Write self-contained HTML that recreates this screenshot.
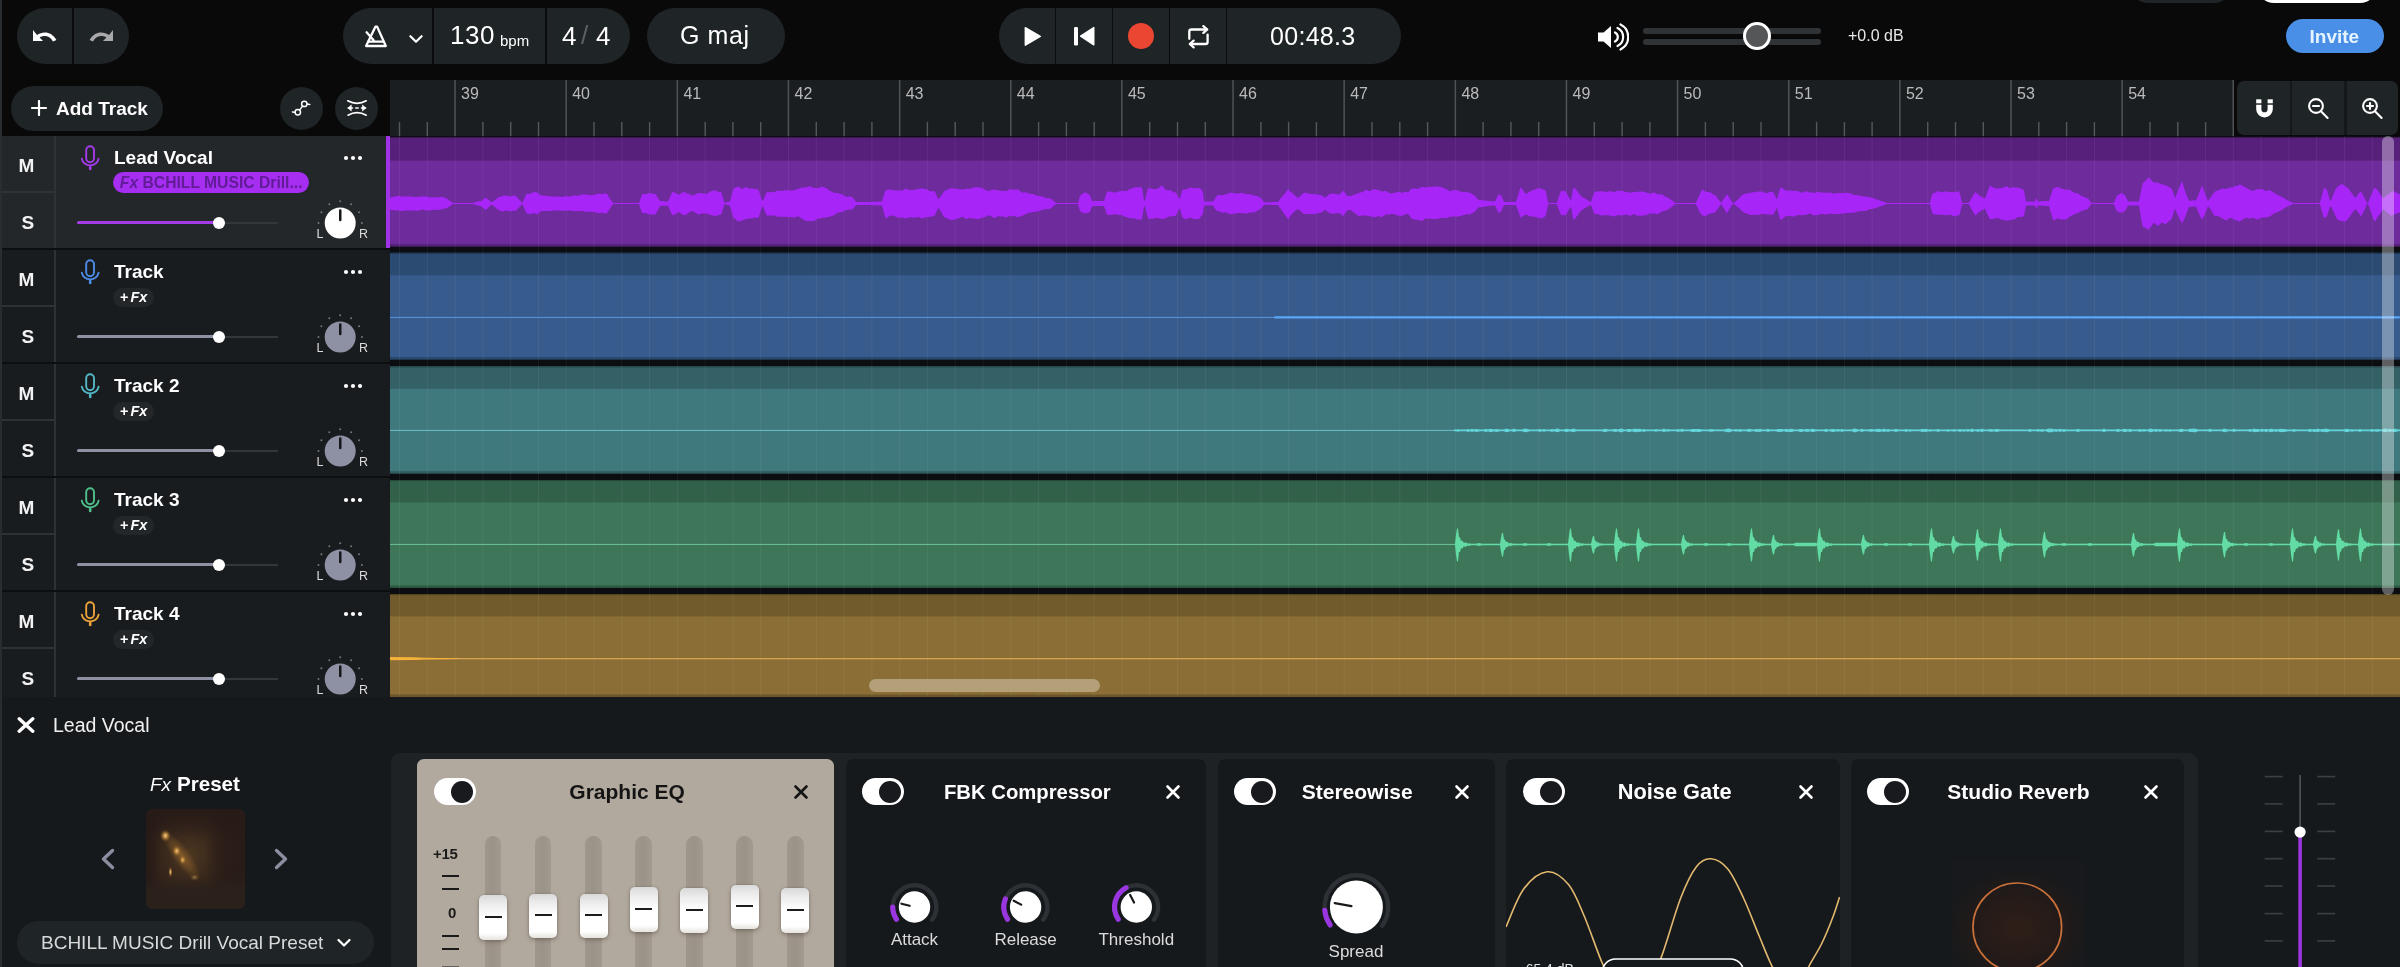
<!DOCTYPE html><html><head><meta charset="utf-8"><title>Studio</title><style>
*{box-sizing:border-box;margin:0;padding:0}
html,body{width:2400px;height:967px;overflow:hidden;background:#090909;font-family:"Liberation Sans",sans-serif;color:#fff}
.abs{position:absolute}
#root{position:relative;width:2400px;height:967px;overflow:hidden;background:#090909;will-change:transform}
.pill{position:absolute;background:#1f2427;border-radius:28px}
.t{position:absolute;white-space:nowrap;line-height:1}
.div{position:absolute;top:0;bottom:0;width:2px;background:#0b0c0d}
</style></head><body><div id="root">
<div class="abs" style="left:0;top:0;width:1.5px;height:967px;background:#2a2d30"></div>
<div class="abs" style="left:2131px;top:-31.3px;width:100px;height:34px;border-radius:17px;background:#1f2427"></div>
<div class="abs" style="left:2257px;top:-31.2px;width:119.5px;height:34px;border-radius:17px;background:#fff"></div>
<div class="pill" style="left:17px;top:8px;width:112px;height:56px"><div class="div" style="left:55px"></div>
<svg class="abs" style="left:15px;top:21px" width="26" height="16" viewBox="0 0 26 16"><path d="M1 1 L1 12 L11 12 L7.6 8.6 C12 5.6 18 7 21 12.4 L24.4 11 C20 2.5 11 1.6 5 6 Z" fill="#fff"/></svg>
<svg class="abs" style="left:71px;top:21px" width="26" height="16" viewBox="0 0 26 16"><path d="M25 1 L25 12 L15 12 L18.4 8.6 C14 5.6 8 7 5 12.4 L1.6 11 C6 2.5 15 1.6 21 6 Z" fill="#a9a9ab"/></svg>
</div>
<div class="pill" style="left:343px;top:8px;width:287px;height:56px"><div class="div" style="left:89px"></div><div class="div" style="left:202px"></div>
<svg class="abs" style="left:19px;top:14px" width="28" height="28" viewBox="0 0 28 28" fill="none" stroke="#fff" stroke-width="2.3" stroke-linejoin="round" stroke-linecap="round"><path d="M13.5 4.6 L15.1 4.6 L23.8 24 L4.1 24 Z"/><path d="M6.3 19.6 L21.6 19.6"/><path d="M4.6 10.3 L11.6 18.3"/></svg>
<svg class="abs" style="left:64.5px;top:26px" width="16" height="10" viewBox="0 0 16 10" fill="none" stroke="#fff" stroke-width="2.2" stroke-linecap="round" stroke-linejoin="round"><path d="M2.4 2.2 L8 7.7 L13.6 2.2"/></svg>
<span class="t" style="left:107px;top:14px;font-size:26px;letter-spacing:.5px">130</span><span class="t" style="left:157px;top:25px;font-size:15px">bpm</span>
<span class="t" style="left:219px;top:15px;font-size:26px">4</span><span class="t" style="left:238px;top:14px;font-size:26px;color:#5d6266">/</span><span class="t" style="left:253px;top:15px;font-size:26px">4</span>
</div>
<div class="pill" style="left:647px;top:8px;width:138px;height:56px"><span class="t" style="left:33px;top:15px;font-size:25px;letter-spacing:.6px">G maj</span></div>
<div class="pill" style="left:999px;top:8px;width:402px;height:56px"><div class="div" style="left:55.7px;width:1.6px"></div><div class="div" style="left:112.7px;width:1.6px"></div><div class="div" style="left:169.7px;width:1.6px"></div><div class="div" style="left:226.7px;width:1.6px"></div>
<svg class="abs" style="left:25px;top:18px" width="18" height="21" viewBox="0 0 18 21"><path d="M1.3 1.6 L16.3 10.4 L1.3 19.2 Z" fill="#fff" stroke="#fff" stroke-width="1.4" stroke-linejoin="round"/></svg>
<svg class="abs" style="left:73.5px;top:18px" width="24" height="20" viewBox="0 0 24 20"><rect x="1" y="1" width="4" height="18.4" rx="1.2" fill="#fff"/><path d="M20.8 1.6 L20.8 18.8 L7.6 10.2 Z" fill="#fff" stroke="#fff" stroke-width="1.4" stroke-linejoin="round"/></svg>
<div class="abs" style="left:129px;top:14.5px;width:26px;height:26px;border-radius:50%;background:#ea4631"></div>
<svg class="abs" style="left:189px;top:16.5px" width="21" height="24" viewBox="0 0 21 24" fill="none" stroke="#fff" stroke-width="2.3" stroke-linecap="round" stroke-linejoin="round"><path d="M1.3 13.8 L1.3 6.6 Q1.3 4.5 3.4 4.5 L18.8 4.5"/><path d="M15.4 1.1 L19.2 4.5 L15.4 7.9"/><path d="M19.6 9.6 L19.6 16.9 Q19.6 19 17.5 19 L2.2 19"/><path d="M5.6 15.6 L1.8 19 L5.6 22.4"/></svg>
<span class="t" style="left:271px;top:16px;font-size:25px;letter-spacing:.3px">00:48.3</span>
</div>
<svg class="abs" style="left:1597px;top:23px" width="32" height="28" viewBox="0 0 32 28"><path d="M1 9.5 L6.5 9.5 L14 3 L14 25 L6.5 18.5 L1 18.5 Z" fill="#fff"/><path d="M18 9.5 A5 5 0 0 1 18 18.5" fill="none" stroke="#fff" stroke-width="2.2" stroke-linecap="round"/><path d="M20.5 5 A10 10 0 0 1 20.5 23" fill="none" stroke="#fff" stroke-width="2.2" stroke-linecap="round"/><path d="M23.5 1.5 A14 14 0 0 1 23.5 26.5" fill="none" stroke="#fff" stroke-width="2.2" stroke-linecap="round"/></svg>
<div class="abs" style="left:1643px;top:28px;width:178px;height:6px;border-radius:3px;background:#303336"></div>
<div class="abs" style="left:1643px;top:39px;width:178px;height:6px;border-radius:3px;background:#303336"></div>
<div class="abs" style="left:1743px;top:22px;width:28px;height:28px;border-radius:50%;background:#555658;border:3px solid #fff"></div>
<span class="t" style="left:1848px;top:28px;font-size:16px;color:#e8e8e8">+0.0 dB</span>
<div class="abs" style="left:2286px;top:19.3px;width:97.5px;height:33.5px;border-radius:17px;background:#4a8fe7"><span class="t" style="left:23.5px;top:8px;font-size:19px;font-weight:bold;color:#e6f4ff">Invite</span></div>
<div class="pill" style="left:11px;top:86px;width:152px;height:45px;border-radius:23px"><svg class="abs" style="left:20px;top:14px" width="16" height="16" viewBox="0 0 16 16"><path d="M8 1 V15 M1 8 H15" stroke="#fff" stroke-width="2.2" stroke-linecap="round"/></svg><span class="t" style="left:45px;top:13px;font-size:19px;font-weight:bold">Add Track</span></div>
<div class="abs" style="left:279.8px;top:87px;width:43px;height:43px;border-radius:50%;background:#1f2427"><svg class="abs" style="left:-0.5px;top:-0.6px" width="44" height="44" viewBox="0 0 44 44" fill="none" stroke="#fff" stroke-width="1.5" stroke-linecap="round"><circle cx="25.3" cy="17.9" r="2.7"/><circle cx="18.8" cy="26.3" r="2.7"/><path d="M20.5 24.1 L23.6 20.1 M28 18 L30.8 18.4 M13.4 25.9 L16.1 26.2"/></svg></div>
<div class="abs" style="left:335.4px;top:87px;width:43px;height:43px;border-radius:50%;background:#1f2427"><svg class="abs" style="left:-0.5px;top:-0.6px" width="44" height="44" viewBox="0 0 44 44" fill="none" stroke="#fff" stroke-width="1.6" stroke-linecap="round" stroke-linejoin="round"><path d="M12.7 14.8 Q22 19.9 31.3 14.8"/><path d="M13 29.2 Q22 24.1 31.3 29.2"/><path d="M13.2 22 L17.5 22 M20.8 22 L23.2 22 M26.5 22 L30.6 22"/><path d="M16 19.4 L13.1 22 L16 24.6 Z M27.8 19.4 L30.7 22 L27.8 24.6 Z" fill="#fff" stroke-width="0.8"/></svg></div>
<div class="abs" style="left:390px;top:80px;width:1844px;height:56px;background:#1b1e21;overflow:hidden">
<svg class="abs" style="left:0;top:0" width="1846" height="56" viewBox="390 80 1846 56"><rect x="371.0" y="122" width="1.4" height="14" fill="#55585b"/><rect x="398.8" y="122" width="1.4" height="14" fill="#55585b"/><rect x="426.6" y="122" width="1.4" height="14" fill="#55585b"/><rect x="454.3" y="80" width="1.5" height="56" fill="#505356"/><text x="461.1" y="99" font-size="16" fill="#b9babb" font-family="Liberation Sans, sans-serif">39</text><rect x="482.2" y="122" width="1.4" height="14" fill="#55585b"/><rect x="510.0" y="122" width="1.4" height="14" fill="#55585b"/><rect x="537.8" y="122" width="1.4" height="14" fill="#55585b"/><rect x="565.4" y="80" width="1.5" height="56" fill="#505356"/><text x="572.2" y="99" font-size="16" fill="#b9babb" font-family="Liberation Sans, sans-serif">40</text><rect x="593.3" y="122" width="1.4" height="14" fill="#55585b"/><rect x="621.1" y="122" width="1.4" height="14" fill="#55585b"/><rect x="648.9" y="122" width="1.4" height="14" fill="#55585b"/><rect x="676.6" y="80" width="1.5" height="56" fill="#505356"/><text x="683.4" y="99" font-size="16" fill="#b9babb" font-family="Liberation Sans, sans-serif">41</text><rect x="704.5" y="122" width="1.4" height="14" fill="#55585b"/><rect x="732.2" y="122" width="1.4" height="14" fill="#55585b"/><rect x="760.0" y="122" width="1.4" height="14" fill="#55585b"/><rect x="787.7" y="80" width="1.5" height="56" fill="#505356"/><text x="794.5" y="99" font-size="16" fill="#b9babb" font-family="Liberation Sans, sans-serif">42</text><rect x="815.6" y="122" width="1.4" height="14" fill="#55585b"/><rect x="843.4" y="122" width="1.4" height="14" fill="#55585b"/><rect x="871.2" y="122" width="1.4" height="14" fill="#55585b"/><rect x="898.9" y="80" width="1.5" height="56" fill="#505356"/><text x="905.7" y="99" font-size="16" fill="#b9babb" font-family="Liberation Sans, sans-serif">43</text><rect x="926.7" y="122" width="1.4" height="14" fill="#55585b"/><rect x="954.5" y="122" width="1.4" height="14" fill="#55585b"/><rect x="982.3" y="122" width="1.4" height="14" fill="#55585b"/><rect x="1010.0" y="80" width="1.5" height="56" fill="#505356"/><text x="1016.8" y="99" font-size="16" fill="#b9babb" font-family="Liberation Sans, sans-serif">44</text><rect x="1037.9" y="122" width="1.4" height="14" fill="#55585b"/><rect x="1065.7" y="122" width="1.4" height="14" fill="#55585b"/><rect x="1093.5" y="122" width="1.4" height="14" fill="#55585b"/><rect x="1121.1" y="80" width="1.5" height="56" fill="#505356"/><text x="1127.9" y="99" font-size="16" fill="#b9babb" font-family="Liberation Sans, sans-serif">45</text><rect x="1149.0" y="122" width="1.4" height="14" fill="#55585b"/><rect x="1176.8" y="122" width="1.4" height="14" fill="#55585b"/><rect x="1204.6" y="122" width="1.4" height="14" fill="#55585b"/><rect x="1232.3" y="80" width="1.5" height="56" fill="#505356"/><text x="1239.1" y="99" font-size="16" fill="#b9babb" font-family="Liberation Sans, sans-serif">46</text><rect x="1260.2" y="122" width="1.4" height="14" fill="#55585b"/><rect x="1287.9" y="122" width="1.4" height="14" fill="#55585b"/><rect x="1315.7" y="122" width="1.4" height="14" fill="#55585b"/><rect x="1343.4" y="80" width="1.5" height="56" fill="#505356"/><text x="1350.2" y="99" font-size="16" fill="#b9babb" font-family="Liberation Sans, sans-serif">47</text><rect x="1371.3" y="122" width="1.4" height="14" fill="#55585b"/><rect x="1399.1" y="122" width="1.4" height="14" fill="#55585b"/><rect x="1426.9" y="122" width="1.4" height="14" fill="#55585b"/><rect x="1454.6" y="80" width="1.5" height="56" fill="#505356"/><text x="1461.4" y="99" font-size="16" fill="#b9babb" font-family="Liberation Sans, sans-serif">48</text><rect x="1482.4" y="122" width="1.4" height="14" fill="#55585b"/><rect x="1510.2" y="122" width="1.4" height="14" fill="#55585b"/><rect x="1538.0" y="122" width="1.4" height="14" fill="#55585b"/><rect x="1565.7" y="80" width="1.5" height="56" fill="#505356"/><text x="1572.5" y="99" font-size="16" fill="#b9babb" font-family="Liberation Sans, sans-serif">49</text><rect x="1593.6" y="122" width="1.4" height="14" fill="#55585b"/><rect x="1621.4" y="122" width="1.4" height="14" fill="#55585b"/><rect x="1649.2" y="122" width="1.4" height="14" fill="#55585b"/><rect x="1676.8" y="80" width="1.5" height="56" fill="#505356"/><text x="1683.6" y="99" font-size="16" fill="#b9babb" font-family="Liberation Sans, sans-serif">50</text><rect x="1704.7" y="122" width="1.4" height="14" fill="#55585b"/><rect x="1732.5" y="122" width="1.4" height="14" fill="#55585b"/><rect x="1760.3" y="122" width="1.4" height="14" fill="#55585b"/><rect x="1788.0" y="80" width="1.5" height="56" fill="#505356"/><text x="1794.8" y="99" font-size="16" fill="#b9babb" font-family="Liberation Sans, sans-serif">51</text><rect x="1815.9" y="122" width="1.4" height="14" fill="#55585b"/><rect x="1843.7" y="122" width="1.4" height="14" fill="#55585b"/><rect x="1871.4" y="122" width="1.4" height="14" fill="#55585b"/><rect x="1899.1" y="80" width="1.5" height="56" fill="#505356"/><text x="1905.9" y="99" font-size="16" fill="#b9babb" font-family="Liberation Sans, sans-serif">52</text><rect x="1927.0" y="122" width="1.4" height="14" fill="#55585b"/><rect x="1954.8" y="122" width="1.4" height="14" fill="#55585b"/><rect x="1982.6" y="122" width="1.4" height="14" fill="#55585b"/><rect x="2010.3" y="80" width="1.5" height="56" fill="#505356"/><text x="2017.1" y="99" font-size="16" fill="#b9babb" font-family="Liberation Sans, sans-serif">53</text><rect x="2038.1" y="122" width="1.4" height="14" fill="#55585b"/><rect x="2065.9" y="122" width="1.4" height="14" fill="#55585b"/><rect x="2093.7" y="122" width="1.4" height="14" fill="#55585b"/><rect x="2121.4" y="80" width="1.5" height="56" fill="#505356"/><text x="2128.2" y="99" font-size="16" fill="#b9babb" font-family="Liberation Sans, sans-serif">54</text><rect x="2149.3" y="122" width="1.4" height="14" fill="#55585b"/><rect x="2177.1" y="122" width="1.4" height="14" fill="#55585b"/><rect x="2204.9" y="122" width="1.4" height="14" fill="#55585b"/><rect x="2232.5" y="80" width="1.5" height="56" fill="#505356"/><text x="2239.3" y="99" font-size="16" fill="#b9babb" font-family="Liberation Sans, sans-serif">55</text><rect x="2260.4" y="122" width="1.4" height="14" fill="#55585b"/><rect x="2288.2" y="122" width="1.4" height="14" fill="#55585b"/><rect x="2316.0" y="122" width="1.4" height="14" fill="#55585b"/></svg>
</div>
<div class="abs" style="left:2237px;top:80.5px;width:160.5px;height:54.5px;background:#1f2427;border-radius:7px"><div class="div" style="left:53px;width:2.4px;background:#15181a"></div><div class="div" style="left:107.2px;width:2.4px;background:#15181a"></div>
<svg class="abs" style="left:18.7px;top:18.2px" width="17" height="19" viewBox="0 0 17 19"><rect x="0.2" y="0.3" width="5.2" height="4" fill="#fff"/><rect x="11.6" y="0.3" width="5.2" height="4" fill="#fff"/><path d="M0.2 5.7 H5.4 V10.2 A3.1 3.1 0 0 0 11.6 10.2 V5.7 H16.8 V10.2 A8.3 8.3 0 0 1 0.2 10.2 Z" fill="#fff"/></svg>
<svg class="abs" style="left:69px;top:15.3px" width="24" height="24" viewBox="0 0 24 24" fill="none" stroke="#fff" stroke-width="2.1" stroke-linecap="round"><circle cx="10" cy="10" r="6.9"/><path d="M15.2 15.4 L21.6 22 M7 10 H13"/></svg>
<svg class="abs" style="left:122.9px;top:15.3px" width="24" height="24" viewBox="0 0 24 24" fill="none" stroke="#fff" stroke-width="2.1" stroke-linecap="round"><circle cx="10" cy="10" r="6.9"/><path d="M15.2 15.4 L21.6 22 M7 10 H13 M10 7 V13"/></svg>
</div>
<div class="abs" style="left:2px;top:136px;width:388px;height:561px;background:#0d0e0f"></div>
<div class="abs" style="left:2px;top:136px;width:384px;height:112px;background:#23272a;overflow:hidden">
<div class="abs" style="left:52px;top:0;width:1.5px;height:112px;background:#2e3235"></div>
<div class="abs" style="left:0;top:55px;width:53px;height:1.5px;background:#2e3235"></div>
<span class="t" style="left:16.5px;top:19.5px;font-size:19px;font-weight:bold;color:#f2f2f2">M</span>
<span class="t" style="left:19.5px;top:76.5px;font-size:19px;font-weight:bold;color:#f2f2f2">S</span>
<svg class="abs" style="left:78px;top:9px" width="21" height="27" viewBox="0 0 21 27" fill="none" stroke="#a43be8" stroke-width="1.9" stroke-linecap="round"><rect x="6.2" y="1.2" width="7.8" height="16" rx="3.9"/><path d="M1.8 13.6 A8.5 8 0 0 0 18.6 13.6"/><path d="M10.2 21.8 V24" stroke-width="2.6"/></svg>
<span class="t" style="left:112px;top:12px;font-size:19px;font-weight:bold;color:#fff">Lead Vocal</span>
<svg class="abs" style="left:341px;top:18.5px" width="20" height="6" viewBox="0 0 20 6"><circle cx="3" cy="3" r="2.1" fill="#fff"/><circle cx="10" cy="3" r="2.1" fill="#fff"/><circle cx="17" cy="3" r="2.1" fill="#fff"/></svg>
<div class="abs" style="left:111px;top:36.3px;width:195.6px;height:20.8px;border-radius:10.4px;background:#a62ef0;overflow:hidden"><span class="t" style="left:6.8px;top:2.6px;font-size:15.7px;color:#621c98;font-weight:bold"><i>Fx</i> BCHILL MUSIC Drill...</span></div>
<div class="abs" style="left:75px;top:85.7px;width:201px;height:2px;background:#33373a"></div>
<div class="abs" style="left:75px;top:85.2px;width:142px;height:3px;border-radius:2px;background:#a43be8"></div>
<div class="abs" style="left:211px;top:80.7px;width:12px;height:12px;border-radius:50%;background:#fff"></div>
<svg class="abs" style="left:308px;top:60px" width="62" height="46" viewBox="0 0 62 46"><circle cx="8.5" cy="27.0" r="1" fill="#74777a"/><circle cx="11.4" cy="16.2" r="1" fill="#74777a"/><circle cx="19.3" cy="8.2" r="1" fill="#74777a"/><circle cx="30.2" cy="5.3" r="1" fill="#74777a"/><circle cx="41.1" cy="8.2" r="1" fill="#74777a"/><circle cx="49.0" cy="16.2" r="1" fill="#74777a"/><circle cx="51.9" cy="27.0" r="1" fill="#74777a"/><circle cx="30.2" cy="27" r="15.5" fill="#fff"/><rect x="29" y="13.2" width="2.5" height="12" rx="1.2" fill="#15171a"/><text x="6.5" y="42.3" font-size="12.5" fill="#dcdcdc" font-family="Liberation Sans, sans-serif">L</text><text x="49" y="42.3" font-size="12.5" fill="#dcdcdc" font-family="Liberation Sans, sans-serif">R</text></svg>
</div>
<div class="abs" style="left:2px;top:250px;width:388px;height:112px;background:#191c1f;overflow:hidden">
<div class="abs" style="left:52px;top:0;width:1.5px;height:112px;background:#2e3235"></div>
<div class="abs" style="left:0;top:55px;width:53px;height:1.5px;background:#2e3235"></div>
<span class="t" style="left:16.5px;top:19.5px;font-size:19px;font-weight:bold;color:#f2f2f2">M</span>
<span class="t" style="left:19.5px;top:76.5px;font-size:19px;font-weight:bold;color:#f2f2f2">S</span>
<svg class="abs" style="left:78px;top:9px" width="21" height="27" viewBox="0 0 21 27" fill="none" stroke="#4c8be6" stroke-width="1.9" stroke-linecap="round"><rect x="6.2" y="1.2" width="7.8" height="16" rx="3.9"/><path d="M1.8 13.6 A8.5 8 0 0 0 18.6 13.6"/><path d="M10.2 21.8 V24" stroke-width="2.6"/></svg>
<span class="t" style="left:112px;top:12px;font-size:19px;font-weight:bold;color:#fff">Track</span>
<svg class="abs" style="left:341px;top:18.5px" width="20" height="6" viewBox="0 0 20 6"><circle cx="3" cy="3" r="2.1" fill="#fff"/><circle cx="10" cy="3" r="2.1" fill="#fff"/><circle cx="17" cy="3" r="2.1" fill="#fff"/></svg>
<div class="abs" style="left:111px;top:149px;display:none"></div>
<div class="abs" style="left:111px;top:37.8px;width:40.5px;height:19px;border-radius:9.5px;background:#23272a"><span class="t" style="left:7px;top:2.3px;font-size:14.4px;color:#fff;font-weight:bold">+<i style="margin-left:2px">Fx</i></span></div>
<div class="abs" style="left:75px;top:85.7px;width:201px;height:2px;background:#33373a"></div>
<div class="abs" style="left:75px;top:85.2px;width:142px;height:3px;border-radius:2px;background:#8e91a3"></div>
<div class="abs" style="left:211px;top:80.7px;width:12px;height:12px;border-radius:50%;background:#fff"></div>
<svg class="abs" style="left:308px;top:60px" width="62" height="46" viewBox="0 0 62 46"><circle cx="8.5" cy="27.0" r="1" fill="#74777a"/><circle cx="11.4" cy="16.2" r="1" fill="#74777a"/><circle cx="19.3" cy="8.2" r="1" fill="#74777a"/><circle cx="30.2" cy="5.3" r="1" fill="#74777a"/><circle cx="41.1" cy="8.2" r="1" fill="#74777a"/><circle cx="49.0" cy="16.2" r="1" fill="#74777a"/><circle cx="51.9" cy="27.0" r="1" fill="#74777a"/><circle cx="30.2" cy="27" r="15.5" fill="#8e91a3"/><rect x="29" y="13.2" width="2.5" height="12" rx="1.2" fill="#15171a"/><text x="6.5" y="42.3" font-size="12.5" fill="#dcdcdc" font-family="Liberation Sans, sans-serif">L</text><text x="49" y="42.3" font-size="12.5" fill="#dcdcdc" font-family="Liberation Sans, sans-serif">R</text></svg>
</div>
<div class="abs" style="left:2px;top:364px;width:388px;height:112px;background:#191c1f;overflow:hidden">
<div class="abs" style="left:52px;top:0;width:1.5px;height:112px;background:#2e3235"></div>
<div class="abs" style="left:0;top:55px;width:53px;height:1.5px;background:#2e3235"></div>
<span class="t" style="left:16.5px;top:19.5px;font-size:19px;font-weight:bold;color:#f2f2f2">M</span>
<span class="t" style="left:19.5px;top:76.5px;font-size:19px;font-weight:bold;color:#f2f2f2">S</span>
<svg class="abs" style="left:78px;top:9px" width="21" height="27" viewBox="0 0 21 27" fill="none" stroke="#52b7c4" stroke-width="1.9" stroke-linecap="round"><rect x="6.2" y="1.2" width="7.8" height="16" rx="3.9"/><path d="M1.8 13.6 A8.5 8 0 0 0 18.6 13.6"/><path d="M10.2 21.8 V24" stroke-width="2.6"/></svg>
<span class="t" style="left:112px;top:12px;font-size:19px;font-weight:bold;color:#fff">Track 2</span>
<svg class="abs" style="left:341px;top:18.5px" width="20" height="6" viewBox="0 0 20 6"><circle cx="3" cy="3" r="2.1" fill="#fff"/><circle cx="10" cy="3" r="2.1" fill="#fff"/><circle cx="17" cy="3" r="2.1" fill="#fff"/></svg>
<div class="abs" style="left:111px;top:149px;display:none"></div>
<div class="abs" style="left:111px;top:37.8px;width:40.5px;height:19px;border-radius:9.5px;background:#23272a"><span class="t" style="left:7px;top:2.3px;font-size:14.4px;color:#fff;font-weight:bold">+<i style="margin-left:2px">Fx</i></span></div>
<div class="abs" style="left:75px;top:85.7px;width:201px;height:2px;background:#33373a"></div>
<div class="abs" style="left:75px;top:85.2px;width:142px;height:3px;border-radius:2px;background:#8e91a3"></div>
<div class="abs" style="left:211px;top:80.7px;width:12px;height:12px;border-radius:50%;background:#fff"></div>
<svg class="abs" style="left:308px;top:60px" width="62" height="46" viewBox="0 0 62 46"><circle cx="8.5" cy="27.0" r="1" fill="#74777a"/><circle cx="11.4" cy="16.2" r="1" fill="#74777a"/><circle cx="19.3" cy="8.2" r="1" fill="#74777a"/><circle cx="30.2" cy="5.3" r="1" fill="#74777a"/><circle cx="41.1" cy="8.2" r="1" fill="#74777a"/><circle cx="49.0" cy="16.2" r="1" fill="#74777a"/><circle cx="51.9" cy="27.0" r="1" fill="#74777a"/><circle cx="30.2" cy="27" r="15.5" fill="#8e91a3"/><rect x="29" y="13.2" width="2.5" height="12" rx="1.2" fill="#15171a"/><text x="6.5" y="42.3" font-size="12.5" fill="#dcdcdc" font-family="Liberation Sans, sans-serif">L</text><text x="49" y="42.3" font-size="12.5" fill="#dcdcdc" font-family="Liberation Sans, sans-serif">R</text></svg>
</div>
<div class="abs" style="left:2px;top:478px;width:388px;height:112px;background:#191c1f;overflow:hidden">
<div class="abs" style="left:52px;top:0;width:1.5px;height:112px;background:#2e3235"></div>
<div class="abs" style="left:0;top:55px;width:53px;height:1.5px;background:#2e3235"></div>
<span class="t" style="left:16.5px;top:19.5px;font-size:19px;font-weight:bold;color:#f2f2f2">M</span>
<span class="t" style="left:19.5px;top:76.5px;font-size:19px;font-weight:bold;color:#f2f2f2">S</span>
<svg class="abs" style="left:78px;top:9px" width="21" height="27" viewBox="0 0 21 27" fill="none" stroke="#4fc08a" stroke-width="1.9" stroke-linecap="round"><rect x="6.2" y="1.2" width="7.8" height="16" rx="3.9"/><path d="M1.8 13.6 A8.5 8 0 0 0 18.6 13.6"/><path d="M10.2 21.8 V24" stroke-width="2.6"/></svg>
<span class="t" style="left:112px;top:12px;font-size:19px;font-weight:bold;color:#fff">Track 3</span>
<svg class="abs" style="left:341px;top:18.5px" width="20" height="6" viewBox="0 0 20 6"><circle cx="3" cy="3" r="2.1" fill="#fff"/><circle cx="10" cy="3" r="2.1" fill="#fff"/><circle cx="17" cy="3" r="2.1" fill="#fff"/></svg>
<div class="abs" style="left:111px;top:149px;display:none"></div>
<div class="abs" style="left:111px;top:37.8px;width:40.5px;height:19px;border-radius:9.5px;background:#23272a"><span class="t" style="left:7px;top:2.3px;font-size:14.4px;color:#fff;font-weight:bold">+<i style="margin-left:2px">Fx</i></span></div>
<div class="abs" style="left:75px;top:85.7px;width:201px;height:2px;background:#33373a"></div>
<div class="abs" style="left:75px;top:85.2px;width:142px;height:3px;border-radius:2px;background:#8e91a3"></div>
<div class="abs" style="left:211px;top:80.7px;width:12px;height:12px;border-radius:50%;background:#fff"></div>
<svg class="abs" style="left:308px;top:60px" width="62" height="46" viewBox="0 0 62 46"><circle cx="8.5" cy="27.0" r="1" fill="#74777a"/><circle cx="11.4" cy="16.2" r="1" fill="#74777a"/><circle cx="19.3" cy="8.2" r="1" fill="#74777a"/><circle cx="30.2" cy="5.3" r="1" fill="#74777a"/><circle cx="41.1" cy="8.2" r="1" fill="#74777a"/><circle cx="49.0" cy="16.2" r="1" fill="#74777a"/><circle cx="51.9" cy="27.0" r="1" fill="#74777a"/><circle cx="30.2" cy="27" r="15.5" fill="#8e91a3"/><rect x="29" y="13.2" width="2.5" height="12" rx="1.2" fill="#15171a"/><text x="6.5" y="42.3" font-size="12.5" fill="#dcdcdc" font-family="Liberation Sans, sans-serif">L</text><text x="49" y="42.3" font-size="12.5" fill="#dcdcdc" font-family="Liberation Sans, sans-serif">R</text></svg>
</div>
<div class="abs" style="left:2px;top:592px;width:388px;height:105px;background:#191c1f;overflow:hidden">
<div class="abs" style="left:52px;top:0;width:1.5px;height:105px;background:#2e3235"></div>
<div class="abs" style="left:0;top:55px;width:53px;height:1.5px;background:#2e3235"></div>
<span class="t" style="left:16.5px;top:19.5px;font-size:19px;font-weight:bold;color:#f2f2f2">M</span>
<span class="t" style="left:19.5px;top:76.5px;font-size:19px;font-weight:bold;color:#f2f2f2">S</span>
<svg class="abs" style="left:78px;top:9px" width="21" height="27" viewBox="0 0 21 27" fill="none" stroke="#eaa13a" stroke-width="1.9" stroke-linecap="round"><rect x="6.2" y="1.2" width="7.8" height="16" rx="3.9"/><path d="M1.8 13.6 A8.5 8 0 0 0 18.6 13.6"/><path d="M10.2 21.8 V24" stroke-width="2.6"/></svg>
<span class="t" style="left:112px;top:12px;font-size:19px;font-weight:bold;color:#fff">Track 4</span>
<svg class="abs" style="left:341px;top:18.5px" width="20" height="6" viewBox="0 0 20 6"><circle cx="3" cy="3" r="2.1" fill="#fff"/><circle cx="10" cy="3" r="2.1" fill="#fff"/><circle cx="17" cy="3" r="2.1" fill="#fff"/></svg>
<div class="abs" style="left:111px;top:149px;display:none"></div>
<div class="abs" style="left:111px;top:37.8px;width:40.5px;height:19px;border-radius:9.5px;background:#23272a"><span class="t" style="left:7px;top:2.3px;font-size:14.4px;color:#fff;font-weight:bold">+<i style="margin-left:2px">Fx</i></span></div>
<div class="abs" style="left:75px;top:85.7px;width:201px;height:2px;background:#33373a"></div>
<div class="abs" style="left:75px;top:85.2px;width:142px;height:3px;border-radius:2px;background:#8e91a3"></div>
<div class="abs" style="left:211px;top:80.7px;width:12px;height:12px;border-radius:50%;background:#fff"></div>
<svg class="abs" style="left:308px;top:60px" width="62" height="46" viewBox="0 0 62 46"><circle cx="8.5" cy="27.0" r="1" fill="#74777a"/><circle cx="11.4" cy="16.2" r="1" fill="#74777a"/><circle cx="19.3" cy="8.2" r="1" fill="#74777a"/><circle cx="30.2" cy="5.3" r="1" fill="#74777a"/><circle cx="41.1" cy="8.2" r="1" fill="#74777a"/><circle cx="49.0" cy="16.2" r="1" fill="#74777a"/><circle cx="51.9" cy="27.0" r="1" fill="#74777a"/><circle cx="30.2" cy="27" r="15.5" fill="#8e91a3"/><rect x="29" y="13.2" width="2.5" height="12" rx="1.2" fill="#15171a"/><text x="6.5" y="42.3" font-size="12.5" fill="#dcdcdc" font-family="Liberation Sans, sans-serif">L</text><text x="49" y="42.3" font-size="12.5" fill="#dcdcdc" font-family="Liberation Sans, sans-serif">R</text></svg>
</div>
<div class="abs" style="left:390px;top:136px;width:2010px;height:561px;background:#0b0d10;overflow:hidden">
<svg class="abs" style="left:0;top:0" width="2010" height="561" viewBox="390 136 2010 561"><rect x="390" y="137" width="2010" height="109.6" fill="#6d2b9c"/><rect x="390" y="137" width="2010" height="23.6" fill="#57217b"/><rect x="390" y="244.1" width="2010" height="2.5" fill="#000" opacity="0.22"/><rect x="390" y="137" width="2010" height="1.2" fill="#000" opacity="0.25"/><rect x="390" y="252.8" width="2010" height="106.80000000000001" fill="#365b8c"/><rect x="390" y="252.8" width="2010" height="22.4" fill="#2c4b73"/><rect x="390" y="357.1" width="2010" height="2.5" fill="#000" opacity="0.22"/><rect x="390" y="252.8" width="2010" height="1.2" fill="#000" opacity="0.25"/><rect x="390" y="366.4" width="2010" height="107.20000000000005" fill="#3f787d"/><rect x="390" y="366.4" width="2010" height="22.4" fill="#346166"/><rect x="390" y="471.1" width="2010" height="2.5" fill="#000" opacity="0.22"/><rect x="390" y="366.4" width="2010" height="1.2" fill="#000" opacity="0.25"/><rect x="390" y="480" width="2010" height="107.79999999999995" fill="#3d7659"/><rect x="390" y="480" width="2010" height="22.4" fill="#32614a"/><rect x="390" y="585.3" width="2010" height="2.5" fill="#000" opacity="0.22"/><rect x="390" y="480" width="2010" height="1.2" fill="#000" opacity="0.25"/><rect x="390" y="594" width="2010" height="103" fill="#8a6e35"/><rect x="390" y="594" width="2010" height="22.4" fill="#715a2b"/><rect x="390" y="694.5" width="2010" height="2.5" fill="#000" opacity="0.22"/><rect x="390" y="594" width="2010" height="1.2" fill="#000" opacity="0.25"/><rect x="260.1" y="136" width="1" height="561" fill="#fff" opacity="0.06"/><rect x="287.9" y="136" width="1" height="561" fill="#fff" opacity="0.06"/><rect x="315.7" y="136" width="1" height="561" fill="#fff" opacity="0.06"/><rect x="343.5" y="136" width="1" height="561" fill="#fff" opacity="0.06"/><rect x="371.2" y="136" width="1" height="561" fill="#fff" opacity="0.06"/><rect x="399.0" y="136" width="1" height="561" fill="#fff" opacity="0.06"/><rect x="426.8" y="136" width="1" height="561" fill="#fff" opacity="0.06"/><rect x="454.6" y="136" width="1" height="561" fill="#fff" opacity="0.06"/><rect x="482.4" y="136" width="1" height="561" fill="#fff" opacity="0.06"/><rect x="510.2" y="136" width="1" height="561" fill="#fff" opacity="0.06"/><rect x="538.0" y="136" width="1" height="561" fill="#fff" opacity="0.06"/><rect x="565.7" y="136" width="1" height="561" fill="#fff" opacity="0.06"/><rect x="593.5" y="136" width="1" height="561" fill="#fff" opacity="0.06"/><rect x="621.3" y="136" width="1" height="561" fill="#fff" opacity="0.06"/><rect x="649.1" y="136" width="1" height="561" fill="#fff" opacity="0.06"/><rect x="676.9" y="136" width="1" height="561" fill="#fff" opacity="0.06"/><rect x="704.7" y="136" width="1" height="561" fill="#fff" opacity="0.06"/><rect x="732.5" y="136" width="1" height="561" fill="#fff" opacity="0.06"/><rect x="760.2" y="136" width="1" height="561" fill="#fff" opacity="0.06"/><rect x="788.0" y="136" width="1" height="561" fill="#fff" opacity="0.06"/><rect x="815.8" y="136" width="1" height="561" fill="#fff" opacity="0.06"/><rect x="843.6" y="136" width="1" height="561" fill="#fff" opacity="0.06"/><rect x="871.4" y="136" width="1" height="561" fill="#fff" opacity="0.06"/><rect x="899.2" y="136" width="1" height="561" fill="#fff" opacity="0.06"/><rect x="926.9" y="136" width="1" height="561" fill="#fff" opacity="0.06"/><rect x="954.7" y="136" width="1" height="561" fill="#fff" opacity="0.06"/><rect x="982.5" y="136" width="1" height="561" fill="#fff" opacity="0.06"/><rect x="1010.3" y="136" width="1" height="561" fill="#fff" opacity="0.06"/><rect x="1038.1" y="136" width="1" height="561" fill="#fff" opacity="0.06"/><rect x="1065.9" y="136" width="1" height="561" fill="#fff" opacity="0.06"/><rect x="1093.7" y="136" width="1" height="561" fill="#fff" opacity="0.06"/><rect x="1121.4" y="136" width="1" height="561" fill="#fff" opacity="0.06"/><rect x="1149.2" y="136" width="1" height="561" fill="#fff" opacity="0.06"/><rect x="1177.0" y="136" width="1" height="561" fill="#fff" opacity="0.06"/><rect x="1204.8" y="136" width="1" height="561" fill="#fff" opacity="0.06"/><rect x="1232.6" y="136" width="1" height="561" fill="#fff" opacity="0.06"/><rect x="1260.4" y="136" width="1" height="561" fill="#fff" opacity="0.06"/><rect x="1288.2" y="136" width="1" height="561" fill="#fff" opacity="0.06"/><rect x="1315.9" y="136" width="1" height="561" fill="#fff" opacity="0.06"/><rect x="1343.7" y="136" width="1" height="561" fill="#fff" opacity="0.06"/><rect x="1371.5" y="136" width="1" height="561" fill="#fff" opacity="0.06"/><rect x="1399.3" y="136" width="1" height="561" fill="#fff" opacity="0.06"/><rect x="1427.1" y="136" width="1" height="561" fill="#fff" opacity="0.06"/><rect x="1454.9" y="136" width="1" height="561" fill="#fff" opacity="0.06"/><rect x="1482.6" y="136" width="1" height="561" fill="#fff" opacity="0.06"/><rect x="1510.4" y="136" width="1" height="561" fill="#fff" opacity="0.06"/><rect x="1538.2" y="136" width="1" height="561" fill="#fff" opacity="0.06"/><rect x="1566.0" y="136" width="1" height="561" fill="#fff" opacity="0.06"/><rect x="1593.8" y="136" width="1" height="561" fill="#fff" opacity="0.06"/><rect x="1621.6" y="136" width="1" height="561" fill="#fff" opacity="0.06"/><rect x="1649.4" y="136" width="1" height="561" fill="#fff" opacity="0.06"/><rect x="1677.1" y="136" width="1" height="561" fill="#fff" opacity="0.06"/><rect x="1704.9" y="136" width="1" height="561" fill="#fff" opacity="0.06"/><rect x="1732.7" y="136" width="1" height="561" fill="#fff" opacity="0.06"/><rect x="1760.5" y="136" width="1" height="561" fill="#fff" opacity="0.06"/><rect x="1788.3" y="136" width="1" height="561" fill="#fff" opacity="0.06"/><rect x="1816.1" y="136" width="1" height="561" fill="#fff" opacity="0.06"/><rect x="1843.9" y="136" width="1" height="561" fill="#fff" opacity="0.06"/><rect x="1871.6" y="136" width="1" height="561" fill="#fff" opacity="0.06"/><rect x="1899.4" y="136" width="1" height="561" fill="#fff" opacity="0.06"/><rect x="1927.2" y="136" width="1" height="561" fill="#fff" opacity="0.06"/><rect x="1955.0" y="136" width="1" height="561" fill="#fff" opacity="0.06"/><rect x="1982.8" y="136" width="1" height="561" fill="#fff" opacity="0.06"/><rect x="2010.6" y="136" width="1" height="561" fill="#fff" opacity="0.06"/><rect x="2038.3" y="136" width="1" height="561" fill="#fff" opacity="0.06"/><rect x="2066.1" y="136" width="1" height="561" fill="#fff" opacity="0.06"/><rect x="2093.9" y="136" width="1" height="561" fill="#fff" opacity="0.06"/><rect x="2121.7" y="136" width="1" height="561" fill="#fff" opacity="0.06"/><rect x="2149.5" y="136" width="1" height="561" fill="#fff" opacity="0.06"/><rect x="2177.3" y="136" width="1" height="561" fill="#fff" opacity="0.06"/><rect x="2205.1" y="136" width="1" height="561" fill="#fff" opacity="0.06"/><rect x="2232.8" y="136" width="1" height="561" fill="#fff" opacity="0.06"/><rect x="2260.6" y="136" width="1" height="561" fill="#fff" opacity="0.06"/><rect x="2288.4" y="136" width="1" height="561" fill="#fff" opacity="0.06"/><rect x="2316.2" y="136" width="1" height="561" fill="#fff" opacity="0.06"/><rect x="2344.0" y="136" width="1" height="561" fill="#fff" opacity="0.06"/><rect x="2371.8" y="136" width="1" height="561" fill="#fff" opacity="0.06"/><path d="M390,197.6 L391,197.4 L392,197.2 L393,197.0 L394,196.8 L395,196.6 L396,196.2 L397,196.0 L398,196.0 L399,196.1 L400,196.3 L401,196.5 L402,196.6 L403,196.6 L404,196.6 L405,196.6 L406,196.6 L407,196.6 L408,196.6 L409,196.6 L410,196.5 L411,196.6 L412,196.8 L413,197.0 L414,197.1 L415,197.0 L416,196.9 L417,196.8 L418,196.7 L419,196.7 L420,196.7 L421,196.6 L422,196.6 L423,196.6 L424,196.6 L425,196.5 L426,196.5 L427,196.6 L428,196.9 L429,197.2 L430,197.4 L431,197.3 L432,197.3 L433,197.2 L434,197.2 L435,197.2 L436,197.3 L437,197.4 L438,197.5 L439,197.3 L440,197.1 L441,196.9 L442,197.0 L443,197.3 L444,197.6 L445,197.9 L446,198.2 L447,198.6 L448,199.5 L449,200.3 L450,201.0 L451,201.5 L452,202.2 L453,202.9 L454,202.9 L455,202.9 L456,202.9 L457,202.9 L458,202.9 L459,202.9 L460,202.9 L461,202.9 L462,202.9 L463,202.9 L464,202.9 L465,202.9 L466,202.9 L467,202.9 L468,202.9 L469,202.9 L470,202.9 L471,202.9 L472,202.9 L473,202.9 L474,202.6 L475,202.4 L476,202.1 L477,201.8 L478,201.6 L479,201.3 L480,201.1 L481,200.9 L482,200.7 L483,199.8 L484,198.9 L485,197.9 L486,197.7 L487,198.6 L488,199.4 L489,200.3 L490,201.2 L491,202.0 L492,202.0 L493,201.4 L494,200.7 L495,199.9 L496,199.1 L497,198.2 L498,197.5 L499,197.1 L500,196.8 L501,196.5 L502,196.1 L503,195.7 L504,195.4 L505,195.4 L506,195.4 L507,195.7 L508,196.0 L509,196.3 L510,196.4 L511,196.2 L512,195.9 L513,195.7 L514,195.5 L515,195.4 L516,196.2 L517,197.3 L518,198.4 L519,199.4 L520,200.4 L521,201.5 L522,202.9 L523,201.5 L524,199.2 L525,197.1 L526,194.9 L527,193.6 L528,193.7 L529,193.7 L530,193.7 L531,193.5 L532,193.0 L533,192.5 L534,192.2 L535,192.1 L536,192.1 L537,192.4 L538,193.2 L539,193.9 L540,194.7 L541,195.5 L542,195.6 L543,195.6 L544,195.7 L545,195.8 L546,195.8 L547,195.9 L548,196.1 L549,196.3 L550,196.4 L551,196.4 L552,196.5 L553,196.6 L554,196.6 L555,196.6 L556,196.6 L557,196.6 L558,196.6 L559,196.6 L560,196.8 L561,196.9 L562,196.9 L563,196.8 L564,196.5 L565,196.2 L566,196.1 L567,196.2 L568,196.4 L569,196.5 L570,196.5 L571,196.3 L572,196.0 L573,195.7 L574,195.5 L575,195.5 L576,195.6 L577,195.8 L578,195.8 L579,195.6 L580,195.2 L581,194.8 L582,194.6 L583,194.5 L584,194.5 L585,194.4 L586,194.4 L587,194.5 L588,194.8 L589,195.2 L590,195.3 L591,195.2 L592,195.1 L593,195.0 L594,194.9 L595,194.7 L596,194.2 L597,193.8 L598,193.6 L599,193.7 L600,193.9 L601,194.1 L602,194.2 L603,194.0 L604,193.7 L605,193.4 L606,193.2 L607,193.8 L608,195.6 L609,197.3 L610,198.8 L611,200.2 L612,201.6 L613,202.9 L614,202.9 L615,202.9 L616,202.9 L617,202.9 L618,202.9 L619,202.9 L620,202.9 L621,202.9 L622,202.9 L623,202.9 L624,202.9 L625,202.9 L626,202.9 L627,202.9 L628,202.9 L629,202.9 L630,202.9 L631,202.9 L632,202.9 L633,202.9 L634,202.9 L635,202.9 L636,202.9 L637,202.9 L638,202.9 L639,202.9 L640,200.0 L641,197.3 L642,194.5 L643,194.0 L644,194.1 L645,194.2 L646,194.1 L647,193.9 L648,193.5 L649,193.2 L650,193.1 L651,193.3 L652,193.5 L653,193.8 L654,194.0 L655,194.1 L656,194.6 L657,196.3 L658,197.9 L659,199.5 L660,201.0 L661,201.0 L662,201.0 L663,201.1 L664,201.3 L665,201.4 L666,201.5 L667,201.5 L668,201.5 L669,199.3 L670,197.0 L671,194.7 L672,192.6 L673,191.8 L674,192.3 L675,192.8 L676,193.4 L677,194.0 L678,194.5 L679,194.8 L680,194.1 L681,193.3 L682,192.6 L683,192.2 L684,192.1 L685,192.2 L686,193.0 L687,193.4 L688,193.6 L689,193.9 L690,194.4 L691,195.1 L692,195.5 L693,195.4 L694,195.1 L695,194.6 L696,194.1 L697,193.5 L698,193.0 L699,192.7 L700,193.0 L701,193.3 L702,193.4 L703,193.5 L704,193.6 L705,193.7 L706,193.8 L707,193.7 L708,193.0 L709,192.2 L710,191.6 L711,191.2 L712,191.0 L713,190.7 L714,190.4 L715,190.2 L716,190.5 L717,191.3 L718,191.8 L719,191.9 L720,191.9 L721,191.8 L722,194.5 L723,198.0 L724,201.5 L725,202.9 L726,202.5 L727,202.2 L728,202.0 L729,201.8 L730,201.5 L731,197.8 L732,193.8 L733,189.6 L734,188.2 L735,187.7 L736,187.4 L737,187.0 L738,186.6 L739,187.0 L740,187.7 L741,188.5 L742,188.9 L743,188.7 L744,188.0 L745,187.4 L746,187.2 L747,187.3 L748,187.9 L749,188.5 L750,188.7 L751,188.5 L752,188.3 L753,188.5 L754,188.9 L755,189.1 L756,189.1 L757,189.2 L758,189.5 L759,190.7 L760,194.2 L761,197.5 L762,200.6 L763,200.6 L764,198.3 L765,195.9 L766,193.6 L767,192.0 L768,192.1 L769,192.2 L770,192.2 L771,192.2 L772,192.1 L773,192.0 L774,191.9 L775,191.7 L776,191.2 L777,190.8 L778,190.6 L779,190.6 L780,190.8 L781,191.0 L782,191.1 L783,190.9 L784,190.6 L785,190.3 L786,190.1 L787,190.2 L788,190.3 L789,190.5 L790,190.6 L791,190.5 L792,190.4 L793,190.3 L794,190.2 L795,190.0 L796,189.6 L797,189.1 L798,188.9 L799,188.6 L800,188.3 L801,188.1 L802,187.6 L803,187.5 L804,187.4 L805,187.2 L806,187.2 L807,187.0 L808,186.7 L809,186.4 L810,186.2 L811,186.5 L812,187.1 L813,187.8 L814,188.1 L815,188.1 L816,188.1 L817,188.1 L818,188.0 L819,187.7 L820,187.2 L821,186.8 L822,186.7 L823,187.0 L824,187.4 L825,187.8 L826,188.1 L827,188.6 L828,189.4 L829,190.3 L830,190.9 L831,191.3 L832,191.8 L833,192.3 L834,192.7 L835,192.9 L836,193.0 L837,193.0 L838,193.3 L839,193.6 L840,193.8 L841,194.0 L842,194.3 L843,194.8 L844,195.5 L845,196.2 L846,196.7 L847,196.8 L848,196.6 L849,196.5 L850,196.6 L851,196.8 L852,197.0 L853,198.0 L854,199.3 L855,200.6 L856,202.0 L857,202.0 L858,202.0 L859,202.0 L860,202.0 L861,202.0 L862,202.0 L863,202.0 L864,202.0 L865,202.0 L866,202.0 L867,202.0 L868,202.0 L869,202.0 L870,202.0 L871,201.9 L872,201.9 L873,201.8 L874,201.8 L875,201.8 L876,201.7 L877,201.7 L878,201.7 L879,201.6 L880,201.6 L881,201.5 L882,201.5 L883,197.8 L884,194.4 L885,191.2 L886,190.2 L887,190.1 L888,189.7 L889,189.4 L890,189.3 L891,189.5 L892,189.8 L893,190.2 L894,190.2 L895,190.2 L896,190.4 L897,190.5 L898,190.6 L899,190.5 L900,190.5 L901,190.6 L902,190.5 L903,190.2 L904,189.7 L905,189.1 L906,188.8 L907,189.0 L908,189.5 L909,189.9 L910,190.1 L911,190.1 L912,190.0 L913,189.9 L914,189.8 L915,189.7 L916,189.5 L917,189.2 L918,189.1 L919,189.0 L920,188.8 L921,188.5 L922,188.5 L923,188.6 L924,188.8 L925,189.1 L926,189.2 L927,189.4 L928,190.1 L929,190.7 L930,191.2 L931,191.3 L932,191.1 L933,191.0 L934,191.2 L935,191.8 L936,194.1 L937,196.6 L938,198.8 L939,198.8 L940,197.3 L941,195.9 L942,194.5 L943,192.9 L944,191.3 L945,190.8 L946,190.3 L947,189.9 L948,189.4 L949,188.9 L950,188.5 L951,188.3 L952,188.3 L953,188.4 L954,188.4 L955,188.6 L956,188.7 L957,188.8 L958,189.0 L959,189.2 L960,189.2 L961,189.3 L962,189.5 L963,189.6 L964,189.4 L965,189.0 L966,188.7 L967,188.6 L968,188.8 L969,188.9 L970,188.9 L971,188.5 L972,188.1 L973,187.6 L974,187.6 L975,187.6 L976,187.3 L977,187.1 L978,187.1 L979,187.4 L980,187.5 L981,187.7 L982,188.0 L983,188.4 L984,189.1 L985,189.8 L986,190.3 L987,190.7 L988,191.1 L989,190.8 L990,190.5 L991,190.2 L992,190.0 L993,189.8 L994,189.5 L995,189.5 L996,189.9 L997,190.3 L998,190.5 L999,190.6 L1000,190.7 L1001,190.9 L1002,190.9 L1003,191.0 L1004,191.0 L1005,191.1 L1006,191.1 L1007,190.8 L1008,190.1 L1009,189.4 L1010,189.2 L1011,189.3 L1012,189.5 L1013,189.7 L1014,189.8 L1015,189.8 L1016,189.6 L1017,189.4 L1018,189.4 L1019,189.9 L1020,190.9 L1021,191.9 L1022,192.5 L1023,192.6 L1024,192.4 L1025,192.3 L1026,192.4 L1027,192.8 L1028,193.2 L1029,193.5 L1030,193.8 L1031,194.0 L1032,194.1 L1033,194.3 L1034,194.5 L1035,194.8 L1036,195.3 L1037,195.8 L1038,196.1 L1039,196.2 L1040,196.2 L1041,196.2 L1042,196.3 L1043,196.7 L1044,197.3 L1045,197.8 L1046,198.1 L1047,198.2 L1048,198.2 L1049,198.2 L1050,198.4 L1051,198.8 L1052,199.6 L1053,200.4 L1054,201.2 L1055,202.1 L1056,202.9 L1057,202.9 L1058,202.9 L1059,202.9 L1060,202.9 L1061,202.9 L1062,202.9 L1063,202.9 L1064,202.9 L1065,202.9 L1066,202.9 L1067,202.9 L1068,202.9 L1069,202.9 L1070,202.9 L1071,202.9 L1072,202.9 L1073,202.9 L1074,202.9 L1075,202.9 L1076,202.9 L1077,202.9 L1078,202.9 L1079,199.4 L1080,195.8 L1081,194.8 L1082,194.2 L1083,193.6 L1084,193.0 L1085,192.3 L1086,192.8 L1087,193.3 L1088,193.9 L1089,194.5 L1090,195.2 L1091,198.1 L1092,200.9 L1093,201.0 L1094,201.0 L1095,201.0 L1096,201.0 L1097,200.9 L1098,200.9 L1099,200.9 L1100,200.9 L1101,200.8 L1102,200.8 L1103,200.9 L1104,200.9 L1105,197.9 L1106,195.0 L1107,191.9 L1108,191.4 L1109,191.5 L1110,191.6 L1111,191.8 L1112,192.0 L1113,192.3 L1114,192.5 L1115,192.6 L1116,192.5 L1117,192.1 L1118,191.8 L1119,191.6 L1120,191.3 L1121,191.0 L1122,190.8 L1123,190.7 L1124,190.9 L1125,191.1 L1126,191.2 L1127,190.8 L1128,190.2 L1129,189.5 L1130,189.1 L1131,188.8 L1132,188.4 L1133,187.9 L1134,187.5 L1135,187.4 L1136,187.3 L1137,187.3 L1138,187.3 L1139,187.3 L1140,187.3 L1141,187.4 L1142,187.4 L1143,194.0 L1144,200.5 L1145,200.5 L1146,196.2 L1147,191.8 L1148,188.4 L1149,188.2 L1150,188.2 L1151,188.4 L1152,188.7 L1153,188.9 L1154,189.1 L1155,189.3 L1156,189.1 L1157,188.8 L1158,188.4 L1159,187.8 L1160,187.0 L1161,186.1 L1162,185.5 L1163,186.4 L1164,187.8 L1165,189.1 L1166,190.0 L1167,190.2 L1168,190.2 L1169,190.2 L1170,190.1 L1171,190.5 L1172,191.2 L1173,191.9 L1174,192.3 L1175,192.2 L1176,192.7 L1177,194.4 L1178,196.3 L1179,198.4 L1180,198.5 L1181,194.8 L1182,191.0 L1183,189.5 L1184,189.5 L1185,189.6 L1186,189.5 L1187,189.1 L1188,188.4 L1189,187.8 L1190,187.5 L1191,187.6 L1192,187.9 L1193,188.1 L1194,188.2 L1195,188.2 L1196,188.2 L1197,188.1 L1198,188.1 L1199,188.1 L1200,188.5 L1201,189.1 L1202,189.9 L1203,192.6 L1204,201.5 L1205,201.5 L1206,201.5 L1207,201.5 L1208,201.5 L1209,201.5 L1210,201.5 L1211,201.5 L1212,201.5 L1213,201.5 L1214,200.2 L1215,198.7 L1216,197.1 L1217,195.4 L1218,195.1 L1219,195.0 L1220,195.1 L1221,195.2 L1222,195.1 L1223,194.9 L1224,194.8 L1225,194.6 L1226,194.5 L1227,194.1 L1228,193.5 L1229,193.0 L1230,192.8 L1231,192.8 L1232,193.0 L1233,193.1 L1234,193.2 L1235,193.3 L1236,193.4 L1237,193.5 L1238,193.6 L1239,193.5 L1240,193.2 L1241,192.9 L1242,192.8 L1243,193.0 L1244,193.4 L1245,193.9 L1246,194.2 L1247,194.2 L1248,194.2 L1249,194.2 L1250,194.2 L1251,194.5 L1252,194.9 L1253,195.3 L1254,195.6 L1255,195.7 L1256,195.7 L1257,196.0 L1258,196.6 L1259,197.1 L1260,197.5 L1261,198.0 L1262,199.1 L1263,200.7 L1264,202.3 L1265,202.3 L1266,202.3 L1267,202.2 L1268,202.2 L1269,202.2 L1270,202.2 L1271,202.2 L1272,202.1 L1273,202.1 L1274,202.1 L1275,202.1 L1276,202.0 L1277,202.0 L1278,202.0 L1279,200.6 L1280,199.3 L1281,198.1 L1282,196.8 L1283,195.6 L1284,194.4 L1285,193.2 L1286,192.0 L1287,190.6 L1288,189.0 L1289,190.1 L1290,191.5 L1291,192.3 L1292,192.9 L1293,193.6 L1294,194.5 L1295,195.4 L1296,196.3 L1297,197.3 L1298,198.2 L1299,197.2 L1300,196.3 L1301,195.4 L1302,194.5 L1303,193.4 L1304,192.9 L1305,192.8 L1306,192.7 L1307,192.9 L1308,193.3 L1309,193.7 L1310,193.9 L1311,193.9 L1312,194.0 L1313,194.1 L1314,194.1 L1315,194.2 L1316,194.3 L1317,194.3 L1318,194.5 L1319,194.8 L1320,195.1 L1321,195.5 L1322,195.8 L1323,196.3 L1324,197.1 L1325,197.8 L1326,197.1 L1327,196.3 L1328,195.5 L1329,194.6 L1330,193.8 L1331,193.7 L1332,193.7 L1333,193.6 L1334,193.7 L1335,193.8 L1336,194.0 L1337,194.2 L1338,194.4 L1339,194.5 L1340,193.9 L1341,193.1 L1342,192.1 L1343,190.9 L1344,191.6 L1345,192.8 L1346,194.3 L1347,195.9 L1348,196.0 L1349,195.9 L1350,195.9 L1351,196.0 L1352,195.6 L1353,195.3 L1354,194.8 L1355,194.3 L1356,194.0 L1357,193.7 L1358,193.3 L1359,192.7 L1360,192.4 L1361,192.3 L1362,192.2 L1363,191.8 L1364,191.0 L1365,190.2 L1366,189.7 L1367,189.9 L1368,190.4 L1369,191.0 L1370,191.1 L1371,190.8 L1372,190.1 L1373,189.4 L1374,189.0 L1375,189.2 L1376,189.5 L1377,189.8 L1378,190.1 L1379,190.3 L1380,190.7 L1381,191.1 L1382,191.4 L1383,191.4 L1384,191.2 L1385,191.0 L1386,191.0 L1387,191.5 L1388,192.2 L1389,192.9 L1390,193.3 L1391,193.4 L1392,193.2 L1393,193.0 L1394,192.9 L1395,192.7 L1396,192.3 L1397,192.0 L1398,191.8 L1399,191.8 L1400,192.1 L1401,192.5 L1402,192.8 L1403,192.6 L1404,192.2 L1405,191.7 L1406,191.6 L1407,191.9 L1408,192.4 L1409,191.5 L1410,190.3 L1411,189.0 L1412,188.4 L1413,188.5 L1414,188.5 L1415,188.5 L1416,188.6 L1417,188.7 L1418,188.7 L1419,188.4 L1420,187.8 L1421,187.2 L1422,186.9 L1423,187.0 L1424,187.1 L1425,187.3 L1426,187.4 L1427,187.3 L1428,187.1 L1429,186.8 L1430,186.7 L1431,186.7 L1432,186.7 L1433,186.6 L1434,186.6 L1435,186.5 L1436,186.3 L1437,186.4 L1438,186.6 L1439,186.8 L1440,186.9 L1441,187.1 L1442,187.3 L1443,187.6 L1444,188.2 L1445,188.7 L1446,189.0 L1447,189.5 L1448,190.1 L1449,190.8 L1450,191.2 L1451,191.0 L1452,190.6 L1453,190.2 L1454,190.0 L1455,190.0 L1456,190.1 L1457,190.2 L1458,190.6 L1459,190.9 L1460,191.3 L1461,191.7 L1462,192.0 L1463,192.1 L1464,192.1 L1465,192.0 L1466,192.1 L1467,192.3 L1468,192.5 L1469,192.6 L1470,192.8 L1471,193.3 L1472,193.9 L1473,194.5 L1474,194.9 L1475,195.7 L1476,197.0 L1477,198.3 L1478,199.7 L1479,199.8 L1480,199.9 L1481,200.0 L1482,200.2 L1483,200.3 L1484,200.4 L1485,200.5 L1486,200.6 L1487,200.7 L1488,200.9 L1489,201.0 L1490,201.1 L1491,201.2 L1492,201.3 L1493,201.3 L1494,201.4 L1495,201.5 L1496,199.4 L1497,197.4 L1498,195.3 L1499,194.3 L1500,194.9 L1501,195.5 L1502,197.3 L1503,199.6 L1504,202.0 L1505,202.0 L1506,202.0 L1507,202.0 L1508,202.0 L1509,202.0 L1510,202.0 L1511,202.0 L1512,202.0 L1513,202.0 L1514,202.0 L1515,202.0 L1516,202.0 L1517,198.7 L1518,195.4 L1519,192.2 L1520,189.1 L1521,187.0 L1522,188.4 L1523,189.9 L1524,191.7 L1525,193.3 L1526,194.0 L1527,193.5 L1528,192.8 L1529,192.1 L1530,191.5 L1531,191.0 L1532,190.4 L1533,190.1 L1534,189.8 L1535,189.5 L1536,189.0 L1537,188.5 L1538,188.2 L1539,188.2 L1540,188.5 L1541,188.7 L1542,189.0 L1543,189.4 L1544,189.7 L1545,190.0 L1546,191.6 L1547,197.0 L1548,202.5 L1549,202.9 L1550,202.9 L1551,202.9 L1552,202.9 L1553,202.9 L1554,202.9 L1555,202.9 L1556,202.9 L1557,202.5 L1558,199.3 L1559,196.3 L1560,193.6 L1561,191.0 L1562,190.8 L1563,190.9 L1564,191.0 L1565,191.1 L1566,192.2 L1567,193.9 L1568,195.8 L1569,197.5 L1570,199.1 L1571,200.6 L1572,194.9 L1573,188.9 L1574,187.1 L1575,188.4 L1576,189.6 L1577,190.8 L1578,192.1 L1579,193.5 L1580,194.9 L1581,196.3 L1582,196.9 L1583,197.4 L1584,198.0 L1585,198.5 L1586,199.1 L1587,199.7 L1588,200.4 L1589,201.0 L1590,201.6 L1591,202.0 L1592,199.1 L1593,196.0 L1594,192.8 L1595,191.7 L1596,191.5 L1597,191.4 L1598,191.4 L1599,191.3 L1600,191.3 L1601,191.2 L1602,191.2 L1603,191.3 L1604,191.5 L1605,191.8 L1606,191.9 L1607,191.8 L1608,191.5 L1609,191.3 L1610,191.2 L1611,191.3 L1612,191.6 L1613,191.9 L1614,192.0 L1615,191.7 L1616,191.3 L1617,190.8 L1618,190.7 L1619,190.7 L1620,190.8 L1621,190.8 L1622,190.9 L1623,191.0 L1624,191.4 L1625,191.8 L1626,192.0 L1627,192.1 L1628,192.3 L1629,192.5 L1630,192.7 L1631,192.6 L1632,192.3 L1633,192.1 L1634,192.0 L1635,192.0 L1636,191.9 L1637,191.8 L1638,191.8 L1639,191.8 L1640,191.6 L1641,191.5 L1642,191.5 L1643,191.7 L1644,192.0 L1645,192.3 L1646,192.4 L1647,192.7 L1648,193.1 L1649,193.5 L1650,193.7 L1651,193.5 L1652,193.1 L1653,192.7 L1654,192.5 L1655,192.9 L1656,193.4 L1657,194.0 L1658,194.3 L1659,194.4 L1660,194.3 L1661,194.3 L1662,194.5 L1663,195.1 L1664,195.8 L1665,196.5 L1666,197.0 L1667,197.3 L1668,197.7 L1669,198.2 L1670,199.0 L1671,199.7 L1672,200.3 L1673,201.1 L1674,201.9 L1675,202.7 L1676,202.9 L1677,202.9 L1678,202.9 L1679,202.9 L1680,202.9 L1681,202.9 L1682,202.9 L1683,202.9 L1684,202.9 L1685,202.9 L1686,202.9 L1687,202.9 L1688,202.9 L1689,202.9 L1690,202.9 L1691,202.9 L1692,202.9 L1693,202.9 L1694,202.9 L1695,202.9 L1696,202.7 L1697,200.6 L1698,198.5 L1699,196.3 L1700,194.1 L1701,191.7 L1702,189.5 L1703,190.0 L1704,190.7 L1705,191.4 L1706,191.8 L1707,192.0 L1708,192.1 L1709,192.0 L1710,192.2 L1711,192.8 L1712,193.6 L1713,194.4 L1714,194.9 L1715,195.1 L1716,196.2 L1717,197.5 L1718,198.8 L1719,200.2 L1720,201.5 L1721,202.9 L1722,201.5 L1723,200.0 L1724,198.6 L1725,197.2 L1726,195.8 L1727,194.2 L1728,195.6 L1729,197.0 L1730,198.6 L1731,200.3 L1732,202.0 L1733,202.9 L1734,202.9 L1735,202.0 L1736,201.1 L1737,200.2 L1738,199.3 L1739,198.4 L1740,197.3 L1741,196.3 L1742,195.3 L1743,194.4 L1744,194.0 L1745,193.8 L1746,193.6 L1747,193.4 L1748,193.3 L1749,193.1 L1750,192.9 L1751,192.6 L1752,192.3 L1753,192.3 L1754,192.3 L1755,192.2 L1756,191.9 L1757,191.7 L1758,191.5 L1759,191.6 L1760,191.6 L1761,191.6 L1762,191.6 L1763,191.9 L1764,192.4 L1765,192.9 L1766,193.1 L1767,192.9 L1768,192.4 L1769,192.0 L1770,191.8 L1771,191.8 L1772,191.7 L1773,192.0 L1774,193.7 L1775,195.6 L1776,197.6 L1777,199.4 L1778,195.8 L1779,192.1 L1780,188.4 L1781,187.6 L1782,188.0 L1783,188.5 L1784,189.3 L1785,190.0 L1786,190.5 L1787,190.7 L1788,190.8 L1789,190.6 L1790,190.6 L1791,190.7 L1792,190.8 L1793,190.9 L1794,191.1 L1795,191.1 L1796,191.1 L1797,191.1 L1798,191.2 L1799,191.5 L1800,192.0 L1801,192.5 L1802,192.8 L1803,192.6 L1804,192.0 L1805,191.4 L1806,191.2 L1807,191.4 L1808,191.9 L1809,192.3 L1810,192.5 L1811,192.5 L1812,192.6 L1813,192.7 L1814,192.8 L1815,192.7 L1816,192.4 L1817,192.1 L1818,192.0 L1819,192.1 L1820,192.3 L1821,192.5 L1822,192.6 L1823,192.6 L1824,192.7 L1825,192.7 L1826,192.8 L1827,192.7 L1828,192.6 L1829,192.5 L1830,192.4 L1831,192.6 L1832,193.1 L1833,193.5 L1834,193.7 L1835,193.6 L1836,193.3 L1837,193.0 L1838,192.9 L1839,192.9 L1840,193.0 L1841,193.1 L1842,193.2 L1843,193.1 L1844,192.9 L1845,192.7 L1846,192.7 L1847,192.8 L1848,193.0 L1849,193.2 L1850,193.3 L1851,193.6 L1852,194.2 L1853,194.7 L1854,195.0 L1855,195.0 L1856,195.1 L1857,195.1 L1858,195.2 L1859,195.4 L1860,195.7 L1861,196.0 L1862,196.2 L1863,196.3 L1864,196.3 L1865,196.4 L1866,196.6 L1867,196.8 L1868,196.9 L1869,197.1 L1870,197.3 L1871,197.6 L1872,197.9 L1873,198.1 L1874,198.4 L1875,198.8 L1876,199.2 L1877,199.6 L1878,199.9 L1879,200.3 L1880,200.6 L1881,201.0 L1882,201.4 L1883,201.6 L1884,202.0 L1885,202.3 L1886,202.7 L1887,202.9 L1888,202.9 L1889,202.9 L1890,202.9 L1891,202.9 L1892,202.9 L1893,202.9 L1894,202.9 L1895,202.9 L1896,202.9 L1897,202.9 L1898,202.9 L1899,202.9 L1900,202.9 L1901,202.9 L1902,202.9 L1903,202.9 L1904,202.9 L1905,202.9 L1906,202.9 L1907,202.9 L1908,202.9 L1909,202.9 L1910,202.9 L1911,202.9 L1912,202.9 L1913,202.9 L1914,202.9 L1915,202.9 L1916,202.9 L1917,202.9 L1918,202.9 L1919,202.9 L1920,202.9 L1921,202.9 L1922,202.9 L1923,202.9 L1924,202.9 L1925,202.9 L1926,202.9 L1927,202.9 L1928,202.9 L1929,202.9 L1930,202.7 L1931,198.7 L1932,194.9 L1933,193.1 L1934,193.1 L1935,192.8 L1936,192.2 L1937,191.6 L1938,191.2 L1939,191.3 L1940,191.7 L1941,192.1 L1942,192.3 L1943,192.2 L1944,191.9 L1945,191.6 L1946,191.5 L1947,191.6 L1948,191.8 L1949,192.0 L1950,192.0 L1951,192.1 L1952,192.1 L1953,192.1 L1954,192.2 L1955,192.0 L1956,191.8 L1957,191.5 L1958,191.4 L1959,191.5 L1960,193.9 L1961,198.2 L1962,202.5 L1963,202.9 L1964,202.9 L1965,202.9 L1966,202.9 L1967,202.9 L1968,202.9 L1969,202.5 L1970,200.8 L1971,199.1 L1972,197.4 L1973,195.6 L1974,193.9 L1975,192.2 L1976,192.4 L1977,193.5 L1978,194.5 L1979,195.3 L1980,195.8 L1981,196.4 L1982,197.0 L1983,197.5 L1984,198.0 L1985,198.4 L1986,195.8 L1987,193.2 L1988,190.6 L1989,188.0 L1990,185.6 L1991,186.1 L1992,186.7 L1993,187.3 L1994,187.9 L1995,188.2 L1996,188.4 L1997,188.6 L1998,188.4 L1999,188.3 L2000,188.2 L2001,188.2 L2002,188.0 L2003,187.7 L2004,187.2 L2005,186.7 L2006,186.3 L2007,186.4 L2008,186.9 L2009,187.7 L2010,188.1 L2011,188.0 L2012,187.7 L2013,187.3 L2014,187.3 L2015,187.4 L2016,187.5 L2017,187.6 L2018,187.7 L2019,188.0 L2020,188.3 L2021,188.6 L2022,188.9 L2023,189.4 L2024,190.5 L2025,196.3 L2026,201.5 L2027,201.5 L2028,201.5 L2029,201.5 L2030,201.5 L2031,201.5 L2032,201.5 L2033,201.5 L2034,201.5 L2035,201.5 L2036,198.0 L2037,199.5 L2038,201.6 L2039,201.5 L2040,201.4 L2041,201.2 L2042,201.1 L2043,201.1 L2044,201.0 L2045,201.0 L2046,201.0 L2047,201.0 L2048,201.0 L2049,201.1 L2050,198.1 L2051,194.9 L2052,191.7 L2053,188.5 L2054,187.9 L2055,187.8 L2056,187.4 L2057,187.0 L2058,186.9 L2059,187.3 L2060,187.8 L2061,188.4 L2062,188.7 L2063,188.9 L2064,189.2 L2065,189.4 L2066,189.7 L2067,189.8 L2068,189.6 L2069,189.5 L2070,189.7 L2071,190.4 L2072,191.2 L2073,192.0 L2074,192.6 L2075,192.9 L2076,193.1 L2077,193.3 L2078,193.6 L2079,194.2 L2080,195.0 L2081,195.7 L2082,196.3 L2083,196.6 L2084,196.9 L2085,197.3 L2086,197.7 L2087,198.1 L2088,198.4 L2089,199.7 L2090,201.1 L2091,202.5 L2092,202.9 L2093,202.9 L2094,202.9 L2095,202.9 L2096,202.9 L2097,202.9 L2098,202.9 L2099,202.9 L2100,202.9 L2101,202.9 L2102,202.9 L2103,202.9 L2104,202.9 L2105,202.9 L2106,202.9 L2107,202.9 L2108,202.9 L2109,202.9 L2110,202.9 L2111,202.9 L2112,202.9 L2113,202.9 L2114,202.5 L2115,200.2 L2116,197.7 L2117,195.5 L2118,194.9 L2119,194.4 L2120,193.8 L2121,193.1 L2122,193.5 L2123,194.1 L2124,194.7 L2125,195.3 L2126,197.2 L2127,199.3 L2128,201.5 L2129,201.5 L2130,201.5 L2131,201.5 L2132,201.5 L2133,201.5 L2134,201.5 L2135,201.5 L2136,201.5 L2137,201.5 L2138,201.5 L2139,201.5 L2140,196.5 L2141,191.3 L2142,186.2 L2143,182.8 L2144,182.0 L2145,181.2 L2146,180.4 L2147,179.2 L2148,177.5 L2149,177.7 L2150,178.5 L2151,179.6 L2152,180.8 L2153,182.0 L2154,182.5 L2155,182.6 L2156,182.6 L2157,182.6 L2158,182.7 L2159,183.0 L2160,183.6 L2161,184.3 L2162,184.6 L2163,184.6 L2164,184.7 L2165,185.1 L2166,185.6 L2167,186.1 L2168,186.6 L2169,187.1 L2170,187.6 L2171,187.9 L2172,189.3 L2173,191.9 L2174,195.0 L2175,198.2 L2176,195.7 L2177,193.1 L2178,190.6 L2179,188.1 L2180,185.7 L2181,183.3 L2182,180.9 L2183,184.1 L2184,187.6 L2185,190.9 L2186,193.6 L2187,196.0 L2188,198.4 L2189,200.7 L2190,200.7 L2191,200.7 L2192,200.5 L2193,200.3 L2194,200.3 L2195,200.3 L2196,200.4 L2197,198.0 L2198,195.7 L2199,193.2 L2200,190.6 L2201,187.8 L2202,185.2 L2203,188.0 L2204,190.9 L2205,193.7 L2206,196.2 L2207,198.6 L2208,201.0 L2209,199.6 L2210,198.2 L2211,196.8 L2212,195.4 L2213,193.9 L2214,192.5 L2215,191.4 L2216,191.1 L2217,190.8 L2218,190.5 L2219,190.1 L2220,189.6 L2221,189.1 L2222,188.7 L2223,188.5 L2224,188.7 L2225,189.0 L2226,188.9 L2227,188.7 L2228,188.2 L2229,187.7 L2230,187.5 L2231,187.6 L2232,187.6 L2233,187.4 L2234,186.6 L2235,186.1 L2236,186.1 L2237,186.1 L2238,185.7 L2239,184.8 L2240,184.5 L2241,184.9 L2242,185.5 L2243,186.1 L2244,186.5 L2245,187.0 L2246,187.7 L2247,188.2 L2248,188.8 L2249,189.4 L2250,189.8 L2251,190.2 L2252,190.7 L2253,191.1 L2254,190.6 L2255,190.0 L2256,189.4 L2257,188.9 L2258,189.2 L2259,189.2 L2260,189.1 L2261,189.0 L2262,189.1 L2263,189.5 L2264,190.1 L2265,190.7 L2266,191.1 L2267,191.0 L2268,190.5 L2269,190.1 L2270,190.3 L2271,190.9 L2272,191.5 L2273,192.1 L2274,192.7 L2275,193.3 L2276,193.9 L2277,194.5 L2278,195.0 L2279,195.5 L2280,196.0 L2281,196.5 L2282,197.0 L2283,197.6 L2284,198.2 L2285,198.8 L2286,199.3 L2287,199.9 L2288,200.4 L2289,201.0 L2290,201.5 L2291,202.0 L2292,202.5 L2293,202.9 L2294,202.9 L2295,202.9 L2296,202.9 L2297,202.9 L2298,202.9 L2299,202.9 L2300,202.9 L2301,202.9 L2302,202.9 L2303,202.9 L2304,202.9 L2305,202.9 L2306,202.9 L2307,202.9 L2308,202.9 L2309,202.9 L2310,202.9 L2311,202.9 L2312,202.9 L2313,202.9 L2314,202.9 L2315,202.9 L2316,202.9 L2317,202.9 L2318,202.9 L2319,202.9 L2320,202.5 L2321,198.8 L2322,195.1 L2323,191.4 L2324,187.7 L2325,188.4 L2326,189.1 L2327,189.9 L2328,193.6 L2329,197.2 L2330,200.6 L2331,200.5 L2332,198.1 L2333,195.5 L2334,192.9 L2335,190.5 L2336,188.3 L2337,187.5 L2338,186.6 L2339,185.8 L2340,185.1 L2341,184.4 L2342,184.0 L2343,184.6 L2344,185.2 L2345,185.9 L2346,186.5 L2347,187.2 L2348,188.0 L2349,189.4 L2350,190.7 L2351,192.1 L2352,193.6 L2353,195.1 L2354,196.4 L2355,197.5 L2356,197.4 L2357,195.9 L2358,194.3 L2359,193.1 L2360,192.1 L2361,191.3 L2362,193.4 L2363,195.1 L2364,196.9 L2365,198.7 L2366,200.6 L2367,202.9 L2368,202.9 L2369,200.5 L2370,197.9 L2371,195.3 L2372,193.0 L2373,190.8 L2374,188.6 L2375,187.4 L2376,188.4 L2377,189.4 L2378,190.7 L2379,192.0 L2380,193.5 L2381,195.0 L2382,196.7 L2383,198.4 L2384,197.5 L2385,196.7 L2386,195.9 L2387,195.1 L2388,194.5 L2389,193.9 L2390,193.3 L2391,192.2 L2392,191.5 L2393,191.3 L2394,191.5 L2395,192.0 L2396,192.5 L2397,193.1 L2398,193.5 L2399,194.0 L2400,194.5 L2400,212.5 L2399,212.8 L2398,213.1 L2397,213.4 L2396,213.8 L2395,214.1 L2394,214.4 L2393,214.9 L2392,215.6 L2391,215.7 L2390,215.0 L2389,214.1 L2388,213.2 L2387,212.3 L2386,211.4 L2385,210.6 L2384,209.8 L2383,208.9 L2382,210.8 L2381,212.5 L2380,213.9 L2379,215.3 L2378,216.6 L2377,218.1 L2376,219.8 L2375,221.6 L2374,220.6 L2373,217.8 L2372,215.0 L2371,212.2 L2370,209.4 L2369,206.6 L2368,204.1 L2367,204.1 L2366,206.6 L2365,208.7 L2364,210.7 L2363,212.7 L2362,214.7 L2361,216.7 L2360,215.1 L2359,213.6 L2358,212.2 L2357,210.8 L2356,209.4 L2355,209.5 L2354,210.7 L2353,212.0 L2352,213.3 L2351,214.7 L2350,216.0 L2349,217.4 L2348,219.0 L2347,220.2 L2346,221.0 L2345,221.4 L2344,221.2 L2343,221.0 L2342,221.2 L2341,220.9 L2340,220.7 L2339,220.4 L2338,219.8 L2337,218.7 L2336,217.3 L2335,214.9 L2334,212.6 L2333,210.6 L2332,208.6 L2331,206.5 L2330,206.6 L2329,209.9 L2328,213.1 L2327,216.2 L2326,216.8 L2325,217.5 L2324,218.4 L2323,215.1 L2322,211.6 L2321,208.0 L2320,204.5 L2319,204.1 L2318,204.1 L2317,204.1 L2316,204.1 L2315,204.1 L2314,204.1 L2313,204.1 L2312,204.1 L2311,204.1 L2310,204.1 L2309,204.1 L2308,204.1 L2307,204.1 L2306,204.1 L2305,204.1 L2304,204.1 L2303,204.1 L2302,204.1 L2301,204.1 L2300,204.1 L2299,204.1 L2298,204.1 L2297,204.1 L2296,204.1 L2295,204.1 L2294,204.1 L2293,204.1 L2292,204.5 L2291,205.0 L2290,205.4 L2289,205.9 L2288,206.3 L2287,206.8 L2286,207.2 L2285,207.8 L2284,208.5 L2283,209.3 L2282,210.0 L2281,210.5 L2280,210.9 L2279,211.3 L2278,211.8 L2277,212.3 L2276,212.7 L2275,213.1 L2274,213.5 L2273,214.1 L2272,214.9 L2271,215.7 L2270,216.3 L2269,216.8 L2268,217.1 L2267,217.3 L2266,217.5 L2265,217.6 L2264,217.5 L2263,217.4 L2262,217.4 L2261,217.8 L2260,218.3 L2259,218.8 L2258,219.2 L2257,219.5 L2256,219.2 L2255,218.8 L2254,218.2 L2253,217.5 L2252,217.9 L2251,218.3 L2250,218.6 L2249,218.6 L2248,218.2 L2247,217.8 L2246,217.8 L2245,218.4 L2244,219.0 L2243,219.5 L2242,220.1 L2241,220.8 L2240,221.6 L2239,221.6 L2238,220.9 L2237,220.5 L2236,220.3 L2235,220.1 L2234,219.6 L2233,218.7 L2232,218.2 L2231,218.1 L2230,218.0 L2229,218.5 L2228,219.2 L2227,220.0 L2226,220.5 L2225,220.0 L2224,219.3 L2223,218.7 L2222,218.3 L2221,217.8 L2220,217.1 L2219,216.5 L2218,216.0 L2217,215.9 L2216,216.1 L2215,216.2 L2214,215.2 L2213,213.6 L2212,211.8 L2211,210.1 L2210,208.6 L2209,207.3 L2208,206.0 L2207,208.7 L2206,211.4 L2205,213.9 L2204,215.9 L2203,217.8 L2202,219.8 L2201,217.8 L2200,215.9 L2199,213.8 L2198,211.5 L2197,209.0 L2196,206.6 L2195,206.7 L2194,206.7 L2193,206.7 L2192,206.7 L2191,206.8 L2190,206.8 L2189,206.8 L2188,209.5 L2187,212.3 L2186,215.0 L2185,217.5 L2184,219.6 L2183,221.5 L2182,223.6 L2181,221.6 L2180,219.7 L2179,217.7 L2178,215.5 L2177,213.2 L2176,210.9 L2175,208.6 L2174,211.6 L2173,214.7 L2172,217.8 L2171,219.9 L2170,220.4 L2169,221.1 L2168,222.1 L2167,223.1 L2166,223.9 L2165,224.1 L2164,223.6 L2163,222.7 L2162,222.4 L2161,222.9 L2160,224.1 L2159,225.2 L2158,225.8 L2157,225.4 L2156,224.4 L2155,223.4 L2154,223.0 L2153,223.7 L2152,225.2 L2151,226.8 L2150,228.1 L2149,229.1 L2148,230.1 L2147,229.0 L2146,228.0 L2145,227.5 L2144,227.4 L2143,227.2 L2142,223.6 L2141,217.4 L2140,211.2 L2139,205.5 L2138,205.5 L2137,205.5 L2136,205.5 L2135,205.5 L2134,205.5 L2133,205.5 L2132,205.5 L2131,205.5 L2130,205.5 L2129,205.5 L2128,205.5 L2127,207.5 L2126,209.5 L2125,211.2 L2124,211.6 L2123,211.9 L2122,212.3 L2121,212.8 L2120,212.4 L2119,212.0 L2118,211.6 L2117,211.3 L2116,209.4 L2115,207.0 L2114,204.5 L2113,204.1 L2112,204.1 L2111,204.1 L2110,204.1 L2109,204.1 L2108,204.1 L2107,204.1 L2106,204.1 L2105,204.1 L2104,204.1 L2103,204.1 L2102,204.1 L2101,204.1 L2100,204.1 L2099,204.1 L2098,204.1 L2097,204.1 L2096,204.1 L2095,204.1 L2094,204.1 L2093,204.1 L2092,204.1 L2091,204.5 L2090,206.1 L2089,207.5 L2088,208.8 L2087,209.2 L2086,209.7 L2085,210.0 L2084,210.3 L2083,210.5 L2082,210.8 L2081,211.2 L2080,211.8 L2079,212.4 L2078,212.9 L2077,213.3 L2076,213.6 L2075,213.9 L2074,214.3 L2073,214.8 L2072,215.4 L2071,216.1 L2070,216.6 L2069,217.2 L2068,218.0 L2067,218.8 L2066,219.5 L2065,219.6 L2064,219.6 L2063,219.6 L2062,219.7 L2061,219.6 L2060,219.1 L2059,218.6 L2058,218.4 L2057,218.8 L2056,219.3 L2055,219.9 L2054,220.2 L2053,219.7 L2052,216.5 L2051,213.1 L2050,209.7 L2049,206.1 L2048,206.1 L2047,206.0 L2046,206.0 L2045,205.9 L2044,205.8 L2043,205.8 L2042,205.7 L2041,205.6 L2040,205.6 L2039,205.5 L2038,205.5 L2037,207.6 L2036,208.7 L2035,205.5 L2034,205.5 L2033,205.5 L2032,205.5 L2031,205.5 L2030,205.5 L2029,205.5 L2028,205.5 L2027,205.5 L2026,205.5 L2025,210.7 L2024,215.9 L2023,216.4 L2022,216.7 L2021,216.9 L2020,216.9 L2019,217.0 L2018,217.1 L2017,217.6 L2016,218.3 L2015,219.0 L2014,219.4 L2013,219.5 L2012,219.7 L2011,219.9 L2010,220.1 L2009,220.3 L2008,220.6 L2007,220.7 L2006,220.5 L2005,220.3 L2004,220.2 L2003,220.1 L2002,220.0 L2001,219.6 L2000,219.1 L1999,218.5 L1998,218.2 L1997,218.0 L1996,218.2 L1995,218.4 L1994,218.8 L1993,219.1 L1992,219.1 L1991,219.2 L1990,219.4 L1989,217.5 L1988,215.5 L1987,213.3 L1986,210.9 L1985,208.4 L1984,209.0 L1983,209.6 L1982,210.2 L1981,210.8 L1980,211.4 L1979,212.1 L1978,212.9 L1977,213.9 L1976,215.2 L1975,215.3 L1974,213.6 L1973,211.8 L1972,210.0 L1971,208.2 L1970,206.3 L1969,204.5 L1968,204.1 L1967,204.1 L1966,204.1 L1965,204.1 L1964,204.1 L1963,204.1 L1962,204.5 L1961,208.8 L1960,213.0 L1959,215.4 L1958,215.3 L1957,215.5 L1956,215.9 L1955,216.2 L1954,216.4 L1953,216.1 L1952,215.5 L1951,214.9 L1950,214.6 L1949,214.7 L1948,214.9 L1947,215.2 L1946,215.3 L1945,215.2 L1944,215.0 L1943,214.8 L1942,214.7 L1941,214.7 L1940,214.7 L1939,214.7 L1938,214.5 L1937,214.4 L1936,214.4 L1935,214.3 L1934,214.2 L1933,214.0 L1932,211.7 L1931,207.9 L1930,204.3 L1929,204.1 L1928,204.1 L1927,204.1 L1926,204.1 L1925,204.1 L1924,204.1 L1923,204.1 L1922,204.1 L1921,204.1 L1920,204.1 L1919,204.1 L1918,204.1 L1917,204.1 L1916,204.1 L1915,204.1 L1914,204.1 L1913,204.1 L1912,204.1 L1911,204.1 L1910,204.1 L1909,204.1 L1908,204.1 L1907,204.1 L1906,204.1 L1905,204.1 L1904,204.1 L1903,204.1 L1902,204.1 L1901,204.1 L1900,204.1 L1899,204.1 L1898,204.1 L1897,204.1 L1896,204.1 L1895,204.1 L1894,204.1 L1893,204.1 L1892,204.1 L1891,204.1 L1890,204.1 L1889,204.1 L1888,204.1 L1887,204.1 L1886,204.3 L1885,204.7 L1884,205.0 L1883,205.4 L1882,205.8 L1881,206.2 L1880,206.5 L1879,206.8 L1878,207.1 L1877,207.5 L1876,207.9 L1875,208.3 L1874,208.6 L1873,208.8 L1872,208.9 L1871,209.0 L1870,209.2 L1869,209.5 L1868,210.0 L1867,210.4 L1866,210.8 L1865,211.0 L1864,211.0 L1863,210.9 L1862,210.9 L1861,211.0 L1860,211.2 L1859,211.3 L1858,211.5 L1857,211.7 L1856,212.1 L1855,212.4 L1854,212.7 L1853,212.7 L1852,212.7 L1851,212.7 L1850,212.8 L1849,212.9 L1848,213.0 L1847,213.1 L1846,213.2 L1845,213.3 L1844,213.4 L1843,213.6 L1842,213.6 L1841,213.7 L1840,213.9 L1839,214.1 L1838,214.1 L1837,214.1 L1836,214.0 L1835,213.9 L1834,213.9 L1833,213.9 L1832,213.8 L1831,213.8 L1830,213.8 L1829,213.9 L1828,214.1 L1827,214.4 L1826,214.5 L1825,214.4 L1824,214.1 L1823,213.9 L1822,213.7 L1821,213.9 L1820,214.3 L1819,214.8 L1818,215.0 L1817,215.0 L1816,215.2 L1815,215.3 L1814,215.4 L1813,215.1 L1812,214.5 L1811,213.8 L1810,213.5 L1809,213.7 L1808,214.1 L1807,214.5 L1806,214.8 L1805,214.9 L1804,215.0 L1803,215.2 L1802,215.3 L1801,215.3 L1800,215.2 L1799,215.0 L1798,215.0 L1797,215.3 L1796,215.7 L1795,216.2 L1794,216.4 L1793,216.4 L1792,216.2 L1791,216.1 L1790,216.0 L1789,216.0 L1788,215.8 L1787,215.8 L1786,216.0 L1785,216.7 L1784,217.6 L1783,218.6 L1782,219.2 L1781,219.7 L1780,219.2 L1779,215.5 L1778,211.6 L1777,207.8 L1776,209.6 L1775,211.4 L1774,213.3 L1773,214.9 L1772,214.9 L1771,214.6 L1770,214.4 L1769,214.4 L1768,214.4 L1767,214.3 L1766,214.3 L1765,214.2 L1764,214.0 L1763,213.9 L1762,213.8 L1761,214.0 L1760,214.5 L1759,214.9 L1758,215.1 L1757,215.1 L1756,214.9 L1755,214.7 L1754,214.6 L1753,214.8 L1752,215.1 L1751,215.1 L1750,214.9 L1749,214.5 L1748,214.0 L1747,213.6 L1746,213.2 L1745,212.9 L1744,212.5 L1743,211.9 L1742,211.0 L1741,210.1 L1740,209.1 L1739,208.2 L1738,207.4 L1737,206.6 L1736,205.8 L1735,205.0 L1734,204.1 L1733,204.1 L1732,205.0 L1731,206.5 L1730,208.0 L1729,209.7 L1728,211.5 L1727,213.4 L1726,212.0 L1725,210.3 L1724,208.5 L1723,206.9 L1722,205.5 L1721,204.1 L1720,205.5 L1719,206.9 L1718,208.4 L1717,209.9 L1716,211.4 L1715,212.6 L1714,212.9 L1713,213.1 L1712,213.2 L1711,213.2 L1710,213.4 L1709,213.8 L1708,214.5 L1707,215.3 L1706,215.9 L1705,216.0 L1704,215.7 L1703,215.5 L1702,215.5 L1701,213.9 L1700,212.4 L1699,210.8 L1698,208.7 L1697,206.5 L1696,204.3 L1695,204.1 L1694,204.1 L1693,204.1 L1692,204.1 L1691,204.1 L1690,204.1 L1689,204.1 L1688,204.1 L1687,204.1 L1686,204.1 L1685,204.1 L1684,204.1 L1683,204.1 L1682,204.1 L1681,204.1 L1680,204.1 L1679,204.1 L1678,204.1 L1677,204.1 L1676,204.1 L1675,204.3 L1674,205.1 L1673,206.0 L1672,206.7 L1671,207.4 L1670,208.1 L1669,208.9 L1668,209.6 L1667,210.0 L1666,210.4 L1665,210.7 L1664,210.9 L1663,211.1 L1662,211.4 L1661,211.9 L1660,212.6 L1659,213.4 L1658,213.9 L1657,213.9 L1656,213.7 L1655,213.5 L1654,213.4 L1653,213.5 L1652,213.4 L1651,213.4 L1650,213.4 L1649,213.7 L1648,214.3 L1647,214.9 L1646,215.2 L1645,215.3 L1644,215.4 L1643,215.6 L1642,215.7 L1641,215.7 L1640,215.7 L1639,215.7 L1638,215.7 L1637,215.5 L1636,214.9 L1635,214.4 L1634,214.1 L1633,214.4 L1632,214.9 L1631,215.5 L1630,215.8 L1629,215.6 L1628,215.2 L1627,214.8 L1626,214.6 L1625,214.7 L1624,215.0 L1623,215.3 L1622,215.5 L1621,215.4 L1620,215.2 L1619,215.0 L1618,215.0 L1617,215.2 L1616,215.8 L1615,216.3 L1614,216.5 L1613,216.3 L1612,216.0 L1611,215.7 L1610,215.5 L1609,215.4 L1608,215.3 L1607,215.2 L1606,215.1 L1605,215.1 L1604,215.3 L1603,215.5 L1602,215.6 L1601,215.4 L1600,214.9 L1599,214.4 L1598,214.2 L1597,214.2 L1596,214.2 L1595,214.2 L1594,213.2 L1593,210.4 L1592,207.6 L1591,205.0 L1590,205.4 L1589,205.9 L1588,206.5 L1587,207.0 L1586,207.5 L1585,208.1 L1584,208.7 L1583,209.4 L1582,210.1 L1581,210.7 L1580,212.0 L1579,213.3 L1578,214.7 L1577,216.0 L1576,217.4 L1575,218.7 L1574,220.1 L1573,218.3 L1572,212.3 L1571,206.5 L1570,208.0 L1569,209.6 L1568,211.2 L1567,212.9 L1566,214.5 L1565,215.4 L1564,215.3 L1563,215.1 L1562,215.2 L1561,214.9 L1560,212.4 L1559,209.9 L1558,207.2 L1557,204.5 L1556,204.1 L1555,204.1 L1554,204.1 L1553,204.1 L1552,204.1 L1551,204.1 L1550,204.1 L1549,204.1 L1548,204.5 L1547,209.7 L1546,214.7 L1545,216.4 L1544,217.1 L1543,217.8 L1542,218.3 L1541,218.4 L1540,218.2 L1539,218.0 L1538,217.8 L1537,217.6 L1536,217.2 L1535,216.9 L1534,216.6 L1533,216.6 L1532,216.7 L1531,216.6 L1530,216.2 L1529,215.8 L1528,215.4 L1527,215.0 L1526,214.5 L1525,214.8 L1524,215.5 L1523,216.0 L1522,216.8 L1521,218.0 L1520,216.2 L1519,213.5 L1518,210.7 L1517,207.8 L1516,205.0 L1515,205.0 L1514,205.0 L1513,205.0 L1512,205.0 L1511,205.0 L1510,205.0 L1509,205.0 L1508,205.0 L1507,205.0 L1506,205.0 L1505,205.0 L1504,205.0 L1503,207.3 L1502,209.6 L1501,211.5 L1500,212.2 L1499,212.9 L1498,211.9 L1497,209.8 L1496,207.7 L1495,205.5 L1494,205.7 L1493,205.8 L1492,205.8 L1491,205.7 L1490,205.8 L1489,205.9 L1488,206.0 L1487,206.2 L1486,206.3 L1485,206.5 L1484,206.7 L1483,206.9 L1482,207.1 L1481,207.2 L1480,207.3 L1479,207.4 L1478,207.5 L1477,208.9 L1476,210.3 L1475,211.6 L1474,212.3 L1473,212.7 L1472,213.3 L1471,213.8 L1470,214.3 L1469,214.4 L1468,214.3 L1467,214.2 L1466,214.3 L1465,214.6 L1464,214.9 L1463,215.3 L1462,215.6 L1461,215.8 L1460,216.0 L1459,216.2 L1458,216.4 L1457,216.7 L1456,216.6 L1455,216.5 L1454,216.4 L1453,216.4 L1452,216.6 L1451,216.7 L1450,216.7 L1449,217.0 L1448,217.4 L1447,217.7 L1446,218.0 L1445,218.1 L1444,217.9 L1443,217.7 L1442,217.8 L1441,218.0 L1440,218.2 L1439,218.5 L1438,218.7 L1437,218.9 L1436,219.1 L1435,219.1 L1434,219.0 L1433,219.0 L1432,218.9 L1431,218.8 L1430,218.7 L1429,218.7 L1428,218.6 L1427,218.5 L1426,218.4 L1425,218.8 L1424,219.7 L1423,220.5 L1422,220.9 L1421,220.7 L1420,220.4 L1419,220.0 L1418,219.9 L1417,219.8 L1416,219.7 L1415,219.5 L1414,219.4 L1413,219.2 L1412,218.8 L1411,217.8 L1410,216.3 L1409,215.0 L1408,213.7 L1407,213.9 L1406,214.1 L1405,214.4 L1404,214.9 L1403,215.5 L1402,215.8 L1401,215.9 L1400,215.9 L1399,215.8 L1398,215.6 L1397,215.3 L1396,214.8 L1395,214.4 L1394,214.1 L1393,214.0 L1392,214.1 L1391,214.1 L1390,214.3 L1389,214.4 L1388,214.4 L1387,214.3 L1386,214.4 L1385,214.9 L1384,215.7 L1383,216.6 L1382,217.1 L1381,217.1 L1380,216.7 L1379,216.3 L1378,216.3 L1377,216.5 L1376,216.8 L1375,217.1 L1374,217.3 L1373,217.1 L1372,216.8 L1371,216.5 L1370,216.3 L1369,216.1 L1368,215.9 L1367,215.8 L1366,215.6 L1365,215.6 L1364,215.6 L1363,215.6 L1362,215.6 L1361,215.6 L1360,216.0 L1359,216.0 L1358,215.6 L1357,214.9 L1356,214.1 L1355,213.3 L1354,212.6 L1353,211.9 L1352,211.0 L1351,210.2 L1350,210.1 L1349,210.1 L1348,210.2 L1347,210.5 L1346,212.1 L1345,213.6 L1344,215.1 L1343,216.1 L1342,215.1 L1341,214.2 L1340,213.4 L1339,212.9 L1338,213.1 L1337,213.2 L1336,213.3 L1335,213.4 L1334,213.4 L1333,213.5 L1332,213.5 L1331,213.5 L1330,213.4 L1329,212.6 L1328,211.9 L1327,211.2 L1326,210.4 L1325,209.7 L1324,210.6 L1323,211.5 L1322,212.2 L1321,212.5 L1320,212.7 L1319,212.9 L1318,213.2 L1317,213.4 L1316,213.7 L1315,213.9 L1314,214.1 L1313,214.1 L1312,214.1 L1311,214.1 L1310,214.1 L1309,214.1 L1308,214.1 L1307,214.1 L1306,214.1 L1305,214.1 L1304,214.0 L1303,213.5 L1302,212.5 L1301,211.5 L1300,210.7 L1299,209.7 L1298,208.8 L1297,209.7 L1296,210.4 L1295,211.1 L1294,211.9 L1293,212.9 L1292,214.1 L1291,215.3 L1290,216.4 L1289,217.9 L1288,219.3 L1287,217.7 L1286,216.3 L1285,214.9 L1284,213.5 L1283,212.1 L1282,210.7 L1281,209.2 L1280,207.8 L1279,206.4 L1278,205.0 L1277,205.0 L1276,205.0 L1275,204.9 L1274,204.9 L1273,204.9 L1272,204.9 L1271,204.8 L1270,204.8 L1269,204.8 L1268,204.8 L1267,204.8 L1266,204.7 L1265,204.7 L1264,204.7 L1263,206.2 L1262,207.6 L1261,208.6 L1260,209.2 L1259,209.8 L1258,210.4 L1257,211.1 L1256,211.7 L1255,212.0 L1254,212.3 L1253,212.4 L1252,212.4 L1251,212.4 L1250,212.5 L1249,212.8 L1248,213.1 L1247,213.4 L1246,213.6 L1245,213.6 L1244,213.4 L1243,213.2 L1242,213.0 L1241,213.0 L1240,213.0 L1239,213.0 L1238,213.0 L1237,213.2 L1236,213.4 L1235,213.7 L1234,213.8 L1233,213.8 L1232,213.9 L1231,213.9 L1230,213.9 L1229,213.8 L1228,213.3 L1227,212.8 L1226,212.5 L1225,212.4 L1224,212.5 L1223,212.6 L1222,212.6 L1221,212.3 L1220,211.8 L1219,211.3 L1218,211.1 L1217,211.0 L1216,209.9 L1215,208.7 L1214,207.2 L1213,205.5 L1212,205.5 L1211,205.5 L1210,205.5 L1209,205.5 L1208,205.5 L1207,205.5 L1206,205.5 L1205,205.5 L1204,205.5 L1203,213.1 L1202,215.2 L1201,216.3 L1200,217.7 L1199,219.0 L1198,219.3 L1197,219.3 L1196,219.1 L1195,219.0 L1194,218.9 L1193,218.7 L1192,218.3 L1191,217.9 L1190,217.8 L1189,218.0 L1188,218.5 L1187,219.0 L1186,219.1 L1185,218.8 L1184,218.4 L1183,218.1 L1182,216.3 L1181,212.6 L1180,208.8 L1179,208.9 L1178,211.2 L1177,213.3 L1176,215.2 L1175,215.9 L1174,215.9 L1173,216.0 L1172,216.2 L1171,216.3 L1170,216.4 L1169,216.6 L1168,217.0 L1167,217.6 L1166,218.2 L1165,218.6 L1164,218.7 L1163,218.7 L1162,219.0 L1161,218.8 L1160,218.6 L1159,218.4 L1158,218.1 L1157,218.0 L1156,218.1 L1155,218.3 L1154,218.6 L1153,218.7 L1152,218.8 L1151,218.8 L1150,218.9 L1149,218.8 L1148,218.4 L1147,214.8 L1146,210.5 L1145,206.4 L1144,206.4 L1143,212.8 L1142,219.2 L1141,219.2 L1140,219.4 L1139,219.6 L1138,219.6 L1137,219.4 L1136,219.0 L1135,218.6 L1134,218.3 L1133,218.2 L1132,218.3 L1131,218.3 L1130,218.2 L1129,218.0 L1128,217.6 L1127,217.2 L1126,217.0 L1125,216.7 L1124,216.2 L1123,215.7 L1122,215.3 L1121,215.1 L1120,215.0 L1119,214.9 L1118,214.8 L1117,214.5 L1116,214.3 L1115,214.4 L1114,214.5 L1113,214.6 L1112,214.7 L1111,214.8 L1110,214.9 L1109,215.0 L1108,215.1 L1107,214.6 L1106,211.7 L1105,208.8 L1104,205.9 L1103,205.9 L1102,205.9 L1101,205.9 L1100,205.9 L1099,205.9 L1098,205.9 L1097,205.9 L1096,206.0 L1095,206.1 L1094,206.2 L1093,206.2 L1092,206.2 L1091,209.0 L1090,211.8 L1089,212.5 L1088,212.7 L1087,213.0 L1086,213.3 L1085,213.8 L1084,213.2 L1083,212.7 L1082,212.2 L1081,211.7 L1080,210.9 L1079,207.5 L1078,204.1 L1077,204.1 L1076,204.1 L1075,204.1 L1074,204.1 L1073,204.1 L1072,204.1 L1071,204.1 L1070,204.1 L1069,204.1 L1068,204.1 L1067,204.1 L1066,204.1 L1065,204.1 L1064,204.1 L1063,204.1 L1062,204.1 L1061,204.1 L1060,204.1 L1059,204.1 L1058,204.1 L1057,204.1 L1056,204.1 L1055,204.9 L1054,205.7 L1053,206.6 L1052,207.4 L1051,208.3 L1050,208.8 L1049,208.9 L1048,208.9 L1047,208.9 L1046,208.9 L1045,209.1 L1044,209.4 L1043,209.7 L1042,209.9 L1041,210.3 L1040,210.7 L1039,211.1 L1038,211.4 L1037,211.6 L1036,211.7 L1035,211.8 L1034,211.9 L1033,212.1 L1032,212.3 L1031,212.4 L1030,212.6 L1029,212.8 L1028,213.2 L1027,213.6 L1026,213.9 L1025,214.3 L1024,214.9 L1023,215.5 L1022,215.9 L1021,216.2 L1020,216.6 L1019,216.9 L1018,217.1 L1017,216.9 L1016,216.6 L1015,216.3 L1014,216.2 L1013,216.2 L1012,216.0 L1011,215.9 L1010,215.9 L1009,216.1 L1008,216.6 L1007,217.2 L1006,217.4 L1005,217.3 L1004,217.0 L1003,216.6 L1002,216.5 L1001,216.5 L1000,216.4 L999,216.3 L998,216.3 L997,216.6 L996,217.3 L995,217.9 L994,217.9 L993,217.5 L992,216.8 L991,216.1 L990,215.6 L989,215.5 L988,215.5 L987,216.2 L986,216.7 L985,217.1 L984,217.3 L983,217.6 L982,217.7 L981,218.0 L980,218.4 L979,218.7 L978,219.0 L977,219.0 L976,218.8 L975,218.6 L974,218.6 L973,218.7 L972,218.4 L971,218.2 L970,218.0 L969,218.1 L968,218.6 L967,219.1 L966,219.1 L965,218.5 L964,217.6 L963,216.9 L962,216.8 L961,217.2 L960,217.7 L959,218.2 L958,218.5 L957,218.8 L956,219.1 L955,219.4 L954,219.7 L953,219.8 L952,219.9 L951,220.0 L950,219.8 L949,219.4 L948,218.8 L947,218.3 L946,217.9 L945,217.4 L944,216.9 L943,215.2 L942,213.5 L941,211.8 L940,210.1 L939,208.4 L938,208.3 L937,210.6 L936,213.0 L935,215.3 L934,215.9 L933,216.2 L932,216.3 L931,216.5 L930,216.7 L929,217.0 L928,217.1 L927,217.2 L926,217.2 L925,217.4 L924,217.8 L923,218.2 L922,218.4 L921,218.2 L920,217.8 L919,217.3 L918,217.1 L917,217.2 L916,217.4 L915,217.6 L914,217.7 L913,217.6 L912,217.5 L911,217.3 L910,217.3 L909,217.4 L908,217.8 L907,218.2 L906,218.3 L905,218.2 L904,218.0 L903,217.7 L902,217.6 L901,217.6 L900,217.6 L899,217.7 L898,217.7 L897,217.3 L896,216.7 L895,216.0 L894,215.7 L893,215.6 L892,215.7 L891,215.8 L890,215.9 L889,216.3 L888,217.1 L887,217.8 L886,218.3 L885,217.0 L884,213.1 L883,209.3 L882,205.5 L881,205.5 L880,205.4 L879,205.4 L878,205.3 L877,205.3 L876,205.3 L875,205.2 L874,205.2 L873,205.2 L872,205.1 L871,205.1 L870,205.0 L869,205.0 L868,205.0 L867,205.0 L866,205.0 L865,205.0 L864,205.0 L863,205.0 L862,205.0 L861,205.0 L860,205.0 L859,205.0 L858,205.0 L857,205.0 L856,205.0 L855,206.3 L854,207.5 L853,208.7 L852,209.4 L851,209.4 L850,209.4 L849,209.6 L848,209.8 L847,209.9 L846,210.2 L845,210.6 L844,211.1 L843,211.6 L842,212.1 L841,212.3 L840,212.4 L839,212.4 L838,212.6 L837,213.1 L836,213.8 L835,214.6 L834,215.2 L833,215.6 L832,215.9 L831,216.2 L830,216.5 L829,216.9 L828,217.1 L827,217.3 L826,217.5 L825,217.6 L824,217.7 L823,217.7 L822,217.9 L821,218.1 L820,218.4 L819,218.6 L818,218.6 L817,219.0 L816,219.8 L815,220.6 L814,221.0 L813,221.0 L812,221.0 L811,221.0 L810,221.0 L809,220.9 L808,221.0 L807,221.0 L806,221.0 L805,220.6 L804,219.9 L803,219.1 L802,218.7 L801,218.1 L800,217.4 L799,216.7 L798,216.2 L797,216.4 L796,216.9 L795,217.3 L794,217.5 L793,217.4 L792,217.3 L791,217.1 L790,217.1 L789,217.0 L788,217.0 L787,216.9 L786,216.8 L785,216.8 L784,216.8 L783,216.7 L782,216.7 L781,216.7 L780,216.7 L779,216.7 L778,216.7 L777,216.5 L776,216.1 L775,215.7 L774,215.5 L773,215.4 L772,215.4 L771,215.4 L770,215.4 L769,215.4 L768,215.6 L767,215.7 L766,214.0 L765,211.6 L764,209.1 L763,206.6 L762,206.7 L761,210.0 L760,213.3 L759,216.7 L758,217.8 L757,218.0 L756,217.8 L755,217.6 L754,217.7 L753,218.2 L752,218.5 L751,218.5 L750,218.4 L749,218.5 L748,218.8 L747,219.1 L746,219.1 L745,219.4 L744,219.8 L743,220.2 L742,220.5 L741,220.8 L740,221.0 L739,221.3 L738,221.5 L737,220.7 L736,219.7 L735,218.7 L734,218.0 L733,216.9 L732,213.3 L731,209.5 L730,205.5 L729,205.2 L728,205.0 L727,204.8 L726,204.5 L725,204.1 L724,205.5 L723,208.8 L722,212.1 L721,214.6 L720,214.8 L719,214.9 L718,215.1 L717,215.5 L716,216.0 L715,216.1 L714,215.8 L713,215.5 L712,215.3 L711,215.1 L710,214.8 L709,214.4 L708,213.9 L707,213.5 L706,213.5 L705,213.6 L704,213.5 L703,213.4 L702,213.4 L701,213.6 L700,214.0 L699,214.4 L698,214.2 L697,213.7 L696,213.0 L695,212.3 L694,211.8 L693,211.5 L692,211.1 L691,211.3 L690,211.9 L689,212.6 L688,213.3 L687,214.0 L686,214.7 L685,215.3 L684,215.2 L683,214.7 L682,214.2 L681,213.5 L680,212.7 L679,212.1 L678,212.4 L677,212.9 L676,213.7 L675,214.4 L674,215.0 L673,215.6 L672,214.8 L671,212.6 L670,210.3 L669,208.0 L668,205.5 L667,205.7 L666,205.8 L665,205.8 L664,205.8 L663,205.8 L662,205.9 L661,205.9 L660,206.0 L659,207.9 L658,209.8 L657,211.7 L656,213.7 L655,214.4 L654,214.6 L653,214.6 L652,214.5 L651,214.4 L650,214.5 L649,214.3 L648,213.9 L647,213.4 L646,213.1 L645,213.0 L644,213.2 L643,213.3 L642,212.8 L641,209.9 L640,206.9 L639,204.1 L638,204.1 L637,204.1 L636,204.1 L635,204.1 L634,204.1 L633,204.1 L632,204.1 L631,204.1 L630,204.1 L629,204.1 L628,204.1 L627,204.1 L626,204.1 L625,204.1 L624,204.1 L623,204.1 L622,204.1 L621,204.1 L620,204.1 L619,204.1 L618,204.1 L617,204.1 L616,204.1 L615,204.1 L614,204.1 L613,204.1 L612,205.5 L611,207.0 L610,208.6 L609,210.1 L608,211.6 L607,213.2 L606,213.7 L605,213.5 L604,213.2 L603,212.8 L602,212.7 L601,212.7 L600,212.9 L599,213.1 L598,213.2 L597,213.0 L596,212.6 L595,212.2 L594,212.0 L593,212.0 L592,211.9 L591,211.8 L590,211.7 L589,211.7 L588,211.7 L587,211.7 L586,211.7 L585,211.6 L584,211.4 L583,211.2 L582,211.0 L581,211.0 L580,211.1 L579,211.1 L578,211.1 L577,211.1 L576,211.2 L575,211.3 L574,211.3 L573,211.1 L572,210.9 L571,210.6 L570,210.4 L569,210.4 L568,210.4 L567,210.5 L566,210.6 L565,210.7 L564,210.7 L563,210.8 L562,210.8 L561,210.8 L560,210.6 L559,210.5 L558,210.4 L557,210.4 L556,210.5 L555,210.5 L554,210.6 L553,210.6 L552,210.8 L551,210.9 L550,211.0 L549,211.0 L548,211.0 L547,210.9 L546,210.9 L545,210.9 L544,210.9 L543,210.9 L542,210.9 L541,211.0 L540,211.9 L539,212.9 L538,213.8 L537,214.2 L536,214.0 L535,213.4 L534,213.0 L533,213.2 L532,213.5 L531,213.8 L530,213.9 L529,213.8 L528,213.7 L527,213.5 L526,212.2 L525,209.9 L524,207.6 L523,205.5 L522,204.1 L521,205.5 L520,206.4 L519,207.5 L518,208.6 L517,209.6 L516,210.4 L515,211.0 L514,210.8 L513,210.8 L512,211.0 L511,211.2 L510,211.2 L509,210.9 L508,210.7 L507,210.5 L506,210.5 L505,210.8 L504,211.3 L503,211.5 L502,211.3 L501,210.9 L500,210.5 L499,210.1 L498,209.7 L497,208.9 L496,208.0 L495,207.1 L494,206.3 L493,205.6 L492,205.0 L491,205.0 L490,206.1 L489,207.0 L488,208.0 L487,208.9 L486,209.8 L485,209.6 L484,208.7 L483,207.8 L482,206.8 L481,206.4 L480,206.1 L479,205.8 L478,205.4 L477,205.2 L476,204.9 L475,204.6 L474,204.4 L473,204.1 L472,204.1 L471,204.1 L470,204.1 L469,204.1 L468,204.1 L467,204.1 L466,204.1 L465,204.1 L464,204.1 L463,204.1 L462,204.1 L461,204.1 L460,204.1 L459,204.1 L458,204.1 L457,204.1 L456,204.1 L455,204.1 L454,204.1 L453,204.1 L452,204.8 L451,205.5 L450,206.1 L449,206.8 L448,207.4 L447,208.1 L446,208.4 L445,208.6 L444,208.8 L443,208.9 L442,209.1 L441,209.4 L440,209.7 L439,209.8 L438,209.9 L437,209.9 L436,209.8 L435,209.8 L434,209.8 L433,209.9 L432,210.1 L431,210.3 L430,210.4 L429,210.4 L428,210.4 L427,210.3 L426,210.3 L425,210.2 L424,210.0 L423,209.7 L422,209.6 L421,209.8 L420,210.2 L419,210.6 L418,210.8 L417,210.8 L416,210.7 L415,210.6 L414,210.6 L413,210.6 L412,210.6 L411,210.6 L410,210.6 L409,210.6 L408,210.6 L407,210.6 L406,210.6 L405,210.6 L404,210.8 L403,211.0 L402,211.1 L401,211.0 L400,210.7 L399,210.5 L398,210.3 L397,210.4 L396,210.4 L395,210.3 L394,210.2 L393,210.0 L392,209.9 L391,209.7 L390,209.6 Z" fill="#a825f7"/><rect x="390" y="316.9" width="2010" height="1.1" fill="#66a6ee" opacity="0.7"/><rect x="1274" y="316.3" width="1126" height="2.2" rx="1" fill="#5aa6f7"/><rect x="390" y="429.9" width="2010" height="1.1" fill="#78d4d9" opacity="0.7"/><path d="M1454,429.6 L1456,429.6 L1458,429.2 L1460,429.6 L1462,429.6 L1464,429.6 L1466,429.6 L1468,428.9 L1470,429.6 L1472,428.8 L1474,429.6 L1476,429.0 L1478,429.2 L1480,429.6 L1482,429.6 L1484,429.6 L1486,428.7 L1488,429.6 L1490,428.7 L1492,428.9 L1494,429.6 L1496,429.0 L1498,429.2 L1500,429.6 L1502,429.6 L1504,429.6 L1506,428.6 L1508,428.9 L1510,429.6 L1512,429.6 L1514,428.6 L1516,429.6 L1518,429.6 L1520,429.6 L1522,429.6 L1524,428.8 L1526,428.6 L1528,429.2 L1530,429.6 L1532,429.6 L1534,429.6 L1536,429.6 L1538,429.6 L1540,429.0 L1542,429.6 L1544,429.1 L1546,429.6 L1548,429.6 L1550,429.6 L1552,429.0 L1554,429.6 L1556,428.8 L1558,428.6 L1560,429.6 L1562,429.6 L1564,429.6 L1566,428.7 L1568,429.1 L1570,429.6 L1572,428.9 L1574,428.6 L1576,429.6 L1578,429.6 L1580,429.6 L1582,429.6 L1584,429.6 L1586,429.6 L1588,429.6 L1590,429.6 L1592,429.6 L1594,429.6 L1596,429.6 L1598,429.6 L1600,429.6 L1602,429.6 L1604,428.9 L1606,428.8 L1608,429.6 L1610,429.6 L1612,429.6 L1614,429.1 L1616,428.9 L1618,429.6 L1620,428.7 L1622,428.6 L1624,429.6 L1626,429.6 L1628,429.0 L1630,429.0 L1632,429.6 L1634,428.8 L1636,428.7 L1638,429.1 L1640,428.8 L1642,429.6 L1644,429.0 L1646,429.6 L1648,429.6 L1650,429.6 L1652,429.6 L1654,429.6 L1656,429.1 L1658,429.6 L1660,429.6 L1662,429.6 L1664,428.6 L1666,429.6 L1668,429.1 L1670,429.6 L1672,429.6 L1674,429.6 L1676,429.6 L1678,429.0 L1680,429.6 L1682,428.8 L1684,429.6 L1686,429.6 L1688,429.6 L1690,429.6 L1692,429.0 L1694,428.9 L1696,429.1 L1698,428.9 L1700,428.9 L1702,429.6 L1704,429.6 L1706,429.6 L1708,429.6 L1710,429.2 L1712,429.1 L1714,429.6 L1716,429.6 L1718,429.6 L1720,429.6 L1722,429.6 L1724,429.6 L1726,429.0 L1728,428.6 L1730,428.7 L1732,429.6 L1734,429.6 L1736,429.1 L1738,429.6 L1740,429.0 L1742,429.6 L1744,429.6 L1746,429.6 L1748,429.1 L1750,428.8 L1752,429.6 L1754,429.6 L1756,429.0 L1758,429.2 L1760,428.8 L1762,429.6 L1764,429.6 L1766,429.6 L1768,428.8 L1770,429.6 L1772,429.6 L1774,429.6 L1776,429.6 L1778,429.0 L1780,428.9 L1782,429.1 L1784,429.6 L1786,428.8 L1788,429.2 L1790,429.0 L1792,428.8 L1794,429.6 L1796,429.6 L1798,429.6 L1800,429.0 L1802,428.9 L1804,429.6 L1806,429.1 L1808,429.0 L1810,429.6 L1812,428.8 L1814,428.9 L1816,429.6 L1818,429.6 L1820,429.6 L1822,429.6 L1824,429.6 L1826,428.7 L1828,429.6 L1830,429.6 L1832,428.9 L1834,429.0 L1836,429.6 L1838,429.1 L1840,429.6 L1842,428.9 L1844,429.6 L1846,429.6 L1848,429.6 L1850,429.6 L1852,429.6 L1854,428.6 L1856,428.7 L1858,429.6 L1860,429.6 L1862,428.8 L1864,429.6 L1866,429.6 L1868,429.6 L1870,429.1 L1872,429.1 L1874,429.6 L1876,429.2 L1878,428.8 L1880,428.9 L1882,429.6 L1884,428.6 L1886,429.6 L1888,428.9 L1890,429.6 L1892,429.6 L1894,429.6 L1896,428.7 L1898,429.6 L1900,429.6 L1902,429.6 L1904,429.6 L1906,429.0 L1908,429.6 L1910,429.2 L1912,429.6 L1914,429.6 L1916,429.6 L1918,429.6 L1920,429.6 L1922,428.8 L1924,429.2 L1926,428.7 L1928,429.6 L1930,429.2 L1932,429.6 L1934,429.6 L1936,429.6 L1938,429.0 L1940,429.6 L1942,429.6 L1944,429.6 L1946,429.6 L1948,429.2 L1950,429.6 L1952,429.6 L1954,429.2 L1956,429.6 L1958,429.6 L1960,428.9 L1962,429.6 L1964,429.2 L1966,429.6 L1968,429.1 L1970,429.6 L1972,428.6 L1974,429.6 L1976,429.6 L1978,428.9 L1980,429.6 L1982,428.6 L1984,429.6 L1986,429.6 L1988,429.6 L1990,429.1 L1992,429.2 L1994,429.6 L1996,428.9 L1998,429.1 L2000,429.6 L2002,429.6 L2004,429.6 L2006,429.6 L2008,429.6 L2010,429.6 L2012,429.6 L2014,429.6 L2016,429.6 L2018,429.6 L2020,429.6 L2022,429.6 L2024,429.6 L2026,429.6 L2028,429.6 L2030,429.0 L2032,429.6 L2034,429.6 L2036,429.6 L2038,429.1 L2040,429.6 L2042,428.9 L2044,429.6 L2046,429.6 L2048,428.6 L2050,428.7 L2052,428.6 L2054,429.6 L2056,429.0 L2058,429.6 L2060,428.8 L2062,429.6 L2064,429.0 L2066,429.6 L2068,429.6 L2070,429.6 L2072,429.6 L2074,429.6 L2076,429.6 L2078,428.7 L2080,429.6 L2082,429.6 L2084,429.6 L2086,429.6 L2088,429.6 L2090,429.6 L2092,429.6 L2094,429.6 L2096,429.6 L2098,429.6 L2100,429.6 L2102,429.6 L2104,428.6 L2106,429.6 L2108,429.6 L2110,429.6 L2112,429.6 L2114,429.6 L2116,429.6 L2118,428.7 L2120,429.6 L2122,429.6 L2124,428.8 L2126,428.9 L2128,429.6 L2130,428.7 L2132,429.6 L2134,429.6 L2136,429.6 L2138,429.6 L2140,429.0 L2142,429.6 L2144,429.1 L2146,429.6 L2148,429.6 L2150,428.6 L2152,428.8 L2154,429.6 L2156,428.8 L2158,429.6 L2160,429.0 L2162,429.6 L2164,429.6 L2166,429.2 L2168,429.6 L2170,429.2 L2172,429.6 L2174,429.6 L2176,429.6 L2178,429.6 L2180,429.0 L2182,428.8 L2184,429.6 L2186,429.6 L2188,429.6 L2190,428.8 L2192,428.8 L2194,428.6 L2196,428.7 L2198,429.6 L2200,429.6 L2202,429.6 L2204,429.6 L2206,429.6 L2208,429.6 L2210,428.8 L2212,429.6 L2214,429.6 L2216,429.6 L2218,429.6 L2220,429.6 L2222,429.6 L2224,428.6 L2226,429.0 L2228,429.6 L2230,429.6 L2232,429.6 L2234,428.8 L2236,429.6 L2238,429.6 L2240,429.6 L2242,429.6 L2244,429.6 L2246,429.6 L2248,429.6 L2250,428.9 L2252,429.6 L2254,428.6 L2256,429.0 L2258,429.0 L2260,429.6 L2262,428.8 L2264,429.6 L2266,428.7 L2268,429.6 L2270,428.9 L2272,428.6 L2274,429.6 L2276,429.0 L2278,429.6 L2280,428.7 L2282,428.9 L2284,428.9 L2286,429.2 L2288,429.6 L2290,429.6 L2292,429.6 L2294,428.9 L2296,429.6 L2298,429.6 L2300,429.6 L2302,429.6 L2304,429.6 L2306,429.6 L2308,429.6 L2310,428.7 L2312,429.6 L2314,428.9 L2316,429.2 L2318,428.6 L2320,429.6 L2322,429.0 L2324,429.1 L2326,428.6 L2328,428.9 L2330,429.6 L2332,429.6 L2334,429.6 L2336,429.6 L2338,429.6 L2340,429.6 L2342,429.6 L2344,429.6 L2346,428.7 L2348,428.9 L2350,429.6 L2352,429.2 L2354,429.6 L2356,429.6 L2358,429.6 L2360,429.0 L2362,429.6 L2364,429.6 L2366,429.6 L2368,429.6 L2370,429.6 L2372,428.9 L2374,429.6 L2376,429.2 L2378,429.1 L2380,429.6 L2382,429.6 L2384,428.8 L2386,428.6 L2388,429.6 L2390,428.7 L2392,429.6 L2394,428.7 L2396,428.8 L2398,429.6 L2400,429.6 L2400,431.3 L2398,431.3 L2396,432.1 L2394,432.2 L2392,431.3 L2390,432.2 L2388,431.3 L2386,432.3 L2384,432.1 L2382,431.3 L2380,431.3 L2378,431.8 L2376,431.7 L2374,431.3 L2372,432.0 L2370,431.3 L2368,431.3 L2366,431.3 L2364,431.3 L2362,431.3 L2360,431.9 L2358,431.3 L2356,431.3 L2354,431.3 L2352,431.7 L2350,431.3 L2348,432.0 L2346,432.2 L2344,431.3 L2342,431.3 L2340,431.3 L2338,431.3 L2336,431.3 L2334,431.3 L2332,431.3 L2330,431.3 L2328,432.0 L2326,432.3 L2324,431.8 L2322,431.9 L2320,431.3 L2318,432.3 L2316,431.7 L2314,432.0 L2312,431.3 L2310,432.2 L2308,431.3 L2306,431.3 L2304,431.3 L2302,431.3 L2300,431.3 L2298,431.3 L2296,431.3 L2294,432.0 L2292,431.3 L2290,431.3 L2288,431.3 L2286,431.7 L2284,432.0 L2282,432.0 L2280,432.2 L2278,431.3 L2276,431.9 L2274,431.3 L2272,432.3 L2270,432.0 L2268,431.3 L2266,432.2 L2264,431.3 L2262,432.1 L2260,431.3 L2258,431.9 L2256,431.9 L2254,432.3 L2252,431.3 L2250,432.0 L2248,431.3 L2246,431.3 L2244,431.3 L2242,431.3 L2240,431.3 L2238,431.3 L2236,431.3 L2234,432.1 L2232,431.3 L2230,431.3 L2228,431.3 L2226,431.9 L2224,432.3 L2222,431.3 L2220,431.3 L2218,431.3 L2216,431.3 L2214,431.3 L2212,431.3 L2210,432.1 L2208,431.3 L2206,431.3 L2204,431.3 L2202,431.3 L2200,431.3 L2198,431.3 L2196,432.2 L2194,432.3 L2192,432.1 L2190,432.1 L2188,431.3 L2186,431.3 L2184,431.3 L2182,432.1 L2180,431.9 L2178,431.3 L2176,431.3 L2174,431.3 L2172,431.3 L2170,431.7 L2168,431.3 L2166,431.7 L2164,431.3 L2162,431.3 L2160,431.9 L2158,431.3 L2156,432.1 L2154,431.3 L2152,432.1 L2150,432.3 L2148,431.3 L2146,431.3 L2144,431.8 L2142,431.3 L2140,431.9 L2138,431.3 L2136,431.3 L2134,431.3 L2132,431.3 L2130,432.2 L2128,431.3 L2126,432.0 L2124,432.1 L2122,431.3 L2120,431.3 L2118,432.2 L2116,431.3 L2114,431.3 L2112,431.3 L2110,431.3 L2108,431.3 L2106,431.3 L2104,432.3 L2102,431.3 L2100,431.3 L2098,431.3 L2096,431.3 L2094,431.3 L2092,431.3 L2090,431.3 L2088,431.3 L2086,431.3 L2084,431.3 L2082,431.3 L2080,431.3 L2078,432.2 L2076,431.3 L2074,431.3 L2072,431.3 L2070,431.3 L2068,431.3 L2066,431.3 L2064,431.9 L2062,431.3 L2060,432.1 L2058,431.3 L2056,431.9 L2054,431.3 L2052,432.3 L2050,432.2 L2048,432.3 L2046,431.3 L2044,431.3 L2042,432.0 L2040,431.3 L2038,431.8 L2036,431.3 L2034,431.3 L2032,431.3 L2030,431.9 L2028,431.3 L2026,431.3 L2024,431.3 L2022,431.3 L2020,431.3 L2018,431.3 L2016,431.3 L2014,431.3 L2012,431.3 L2010,431.3 L2008,431.3 L2006,431.3 L2004,431.3 L2002,431.3 L2000,431.3 L1998,431.8 L1996,432.0 L1994,431.3 L1992,431.7 L1990,431.8 L1988,431.3 L1986,431.3 L1984,431.3 L1982,432.3 L1980,431.3 L1978,432.0 L1976,431.3 L1974,431.3 L1972,432.3 L1970,431.3 L1968,431.8 L1966,431.3 L1964,431.7 L1962,431.3 L1960,432.0 L1958,431.3 L1956,431.3 L1954,431.7 L1952,431.3 L1950,431.3 L1948,431.7 L1946,431.3 L1944,431.3 L1942,431.3 L1940,431.3 L1938,431.9 L1936,431.3 L1934,431.3 L1932,431.3 L1930,431.7 L1928,431.3 L1926,432.2 L1924,431.7 L1922,432.1 L1920,431.3 L1918,431.3 L1916,431.3 L1914,431.3 L1912,431.3 L1910,431.7 L1908,431.3 L1906,431.9 L1904,431.3 L1902,431.3 L1900,431.3 L1898,431.3 L1896,432.2 L1894,431.3 L1892,431.3 L1890,431.3 L1888,432.0 L1886,431.3 L1884,432.3 L1882,431.3 L1880,432.0 L1878,432.1 L1876,431.7 L1874,431.3 L1872,431.8 L1870,431.8 L1868,431.3 L1866,431.3 L1864,431.3 L1862,432.1 L1860,431.3 L1858,431.3 L1856,432.2 L1854,432.3 L1852,431.3 L1850,431.3 L1848,431.3 L1846,431.3 L1844,431.3 L1842,432.0 L1840,431.3 L1838,431.8 L1836,431.3 L1834,431.9 L1832,432.0 L1830,431.3 L1828,431.3 L1826,432.2 L1824,431.3 L1822,431.3 L1820,431.3 L1818,431.3 L1816,431.3 L1814,432.0 L1812,432.1 L1810,431.3 L1808,431.9 L1806,431.8 L1804,431.3 L1802,432.0 L1800,431.9 L1798,431.3 L1796,431.3 L1794,431.3 L1792,432.1 L1790,431.9 L1788,431.7 L1786,432.1 L1784,431.3 L1782,431.8 L1780,432.0 L1778,431.9 L1776,431.3 L1774,431.3 L1772,431.3 L1770,431.3 L1768,432.1 L1766,431.3 L1764,431.3 L1762,431.3 L1760,432.1 L1758,431.7 L1756,431.9 L1754,431.3 L1752,431.3 L1750,432.1 L1748,431.8 L1746,431.3 L1744,431.3 L1742,431.3 L1740,431.9 L1738,431.3 L1736,431.8 L1734,431.3 L1732,431.3 L1730,432.2 L1728,432.3 L1726,431.9 L1724,431.3 L1722,431.3 L1720,431.3 L1718,431.3 L1716,431.3 L1714,431.3 L1712,431.8 L1710,431.7 L1708,431.3 L1706,431.3 L1704,431.3 L1702,431.3 L1700,432.0 L1698,432.0 L1696,431.8 L1694,432.0 L1692,431.9 L1690,431.3 L1688,431.3 L1686,431.3 L1684,431.3 L1682,432.1 L1680,431.3 L1678,431.9 L1676,431.3 L1674,431.3 L1672,431.3 L1670,431.3 L1668,431.8 L1666,431.3 L1664,432.3 L1662,431.3 L1660,431.3 L1658,431.3 L1656,431.8 L1654,431.3 L1652,431.3 L1650,431.3 L1648,431.3 L1646,431.3 L1644,431.9 L1642,431.3 L1640,432.1 L1638,431.8 L1636,432.2 L1634,432.1 L1632,431.3 L1630,431.9 L1628,431.9 L1626,431.3 L1624,431.3 L1622,432.3 L1620,432.2 L1618,431.3 L1616,432.0 L1614,431.8 L1612,431.3 L1610,431.3 L1608,431.3 L1606,432.1 L1604,432.0 L1602,431.3 L1600,431.3 L1598,431.3 L1596,431.3 L1594,431.3 L1592,431.3 L1590,431.3 L1588,431.3 L1586,431.3 L1584,431.3 L1582,431.3 L1580,431.3 L1578,431.3 L1576,431.3 L1574,432.3 L1572,432.0 L1570,431.3 L1568,431.8 L1566,432.2 L1564,431.3 L1562,431.3 L1560,431.3 L1558,432.3 L1556,432.1 L1554,431.3 L1552,431.9 L1550,431.3 L1548,431.3 L1546,431.3 L1544,431.8 L1542,431.3 L1540,431.9 L1538,431.3 L1536,431.3 L1534,431.3 L1532,431.3 L1530,431.3 L1528,431.7 L1526,432.3 L1524,432.1 L1522,431.3 L1520,431.3 L1518,431.3 L1516,431.3 L1514,432.3 L1512,431.3 L1510,431.3 L1508,432.0 L1506,432.3 L1504,431.3 L1502,431.3 L1500,431.3 L1498,431.7 L1496,431.9 L1494,431.3 L1492,432.0 L1490,432.2 L1488,431.3 L1486,432.2 L1484,431.3 L1482,431.3 L1480,431.3 L1478,431.7 L1476,431.9 L1474,431.3 L1472,432.1 L1470,431.3 L1468,432.0 L1466,431.3 L1464,431.3 L1462,431.3 L1460,431.3 L1458,431.7 L1456,431.3 L1454,431.3 Z" fill="#62d4da"/><rect x="390" y="543.9" width="2010" height="1.1" fill="#78d9aa" opacity="0.7"/><path d="M1455,543.7 L1456,534.8 L1457,528.4 L1458,528.4 L1459,537.2 L1460,537.2 L1461,541.0 L1462,540.4 L1463,541.4 L1464,543.0 L1465,542.2 L1466,542.4 L1467,543.2 L1468,543.4 L1469,543.2 L1470,543.5 L1471,543.7 L1472,543.7 L1473,543.7 L1474,543.7 L1475,543.7 L1476,543.7 L1477,543.5 L1478,543.3 L1479,543.0 L1480,543.3 L1481,543.5 L1482,543.7 L1483,543.7 L1484,543.7 L1485,543.7 L1486,543.7 L1487,543.7 L1488,543.7 L1489,543.7 L1490,543.7 L1491,543.7 L1492,543.7 L1493,543.7 L1494,543.7 L1495,543.7 L1496,543.7 L1497,543.7 L1498,543.7 L1499,543.7 L1500,543.7 L1501,537.7 L1502,533.1 L1503,533.1 L1504,539.4 L1505,539.4 L1506,542.0 L1507,541.6 L1508,542.3 L1509,543.4 L1510,542.9 L1511,543.0 L1512,543.6 L1513,543.7 L1514,543.6 L1515,543.7 L1516,543.7 L1517,543.7 L1518,543.7 L1519,543.7 L1520,543.7 L1521,543.7 L1522,543.7 L1523,543.5 L1524,543.3 L1525,543.0 L1526,543.3 L1527,543.5 L1528,543.7 L1529,543.7 L1530,543.7 L1531,543.7 L1532,543.7 L1533,543.7 L1534,543.7 L1535,543.7 L1536,543.7 L1537,543.7 L1538,543.7 L1539,543.7 L1540,543.7 L1541,543.7 L1542,543.7 L1543,543.7 L1544,543.7 L1545,543.7 L1546,543.7 L1547,543.5 L1548,543.3 L1549,543.0 L1550,543.3 L1551,543.5 L1552,543.7 L1553,543.7 L1554,543.7 L1555,543.7 L1556,543.7 L1557,543.7 L1558,543.7 L1559,543.7 L1560,543.7 L1561,543.7 L1562,543.7 L1563,543.7 L1564,543.7 L1565,543.7 L1566,543.7 L1567,543.7 L1568,543.7 L1569,534.8 L1570,528.4 L1571,528.4 L1572,537.2 L1573,537.2 L1574,541.0 L1575,540.4 L1576,541.4 L1577,543.0 L1578,542.2 L1579,542.4 L1580,543.2 L1581,543.4 L1582,543.2 L1583,543.5 L1584,543.7 L1585,543.7 L1586,543.7 L1587,543.7 L1588,543.7 L1589,543.7 L1590,543.7 L1591,543.7 L1592,539.4 L1593,536.0 L1594,536.0 L1595,540.7 L1596,540.7 L1597,542.6 L1598,542.3 L1599,542.8 L1600,543.7 L1601,543.3 L1602,543.4 L1603,543.7 L1604,543.7 L1605,543.7 L1606,543.7 L1607,543.7 L1608,543.7 L1609,543.7 L1610,543.7 L1611,543.7 L1612,543.7 L1613,543.7 L1614,543.7 L1615,534.8 L1616,528.4 L1617,528.4 L1618,537.2 L1619,537.2 L1620,541.0 L1621,540.4 L1622,541.4 L1623,543.0 L1624,542.2 L1625,542.4 L1626,543.2 L1627,543.4 L1628,543.2 L1629,543.5 L1630,543.7 L1631,543.7 L1632,543.7 L1633,543.7 L1634,543.7 L1635,543.7 L1636,543.7 L1637,534.8 L1638,528.4 L1639,528.4 L1640,537.2 L1641,537.2 L1642,541.0 L1643,540.4 L1644,541.4 L1645,543.0 L1646,542.2 L1647,542.4 L1648,543.2 L1649,543.4 L1650,543.2 L1651,543.5 L1652,543.7 L1653,543.7 L1654,543.7 L1655,543.7 L1656,543.7 L1657,543.7 L1658,543.7 L1659,543.7 L1660,543.7 L1661,543.7 L1662,543.7 L1663,543.7 L1664,543.7 L1665,543.7 L1666,543.7 L1667,543.7 L1668,543.7 L1669,543.7 L1670,543.7 L1671,543.7 L1672,543.7 L1673,543.7 L1674,543.7 L1675,543.7 L1676,543.7 L1677,543.7 L1678,543.7 L1679,543.7 L1680,543.7 L1681,543.7 L1682,538.8 L1683,535.0 L1684,535.0 L1685,540.2 L1686,540.2 L1687,542.4 L1688,542.1 L1689,542.7 L1690,543.6 L1691,543.2 L1692,543.3 L1693,543.7 L1694,543.7 L1695,543.7 L1696,543.7 L1697,543.7 L1698,543.7 L1699,543.7 L1700,543.7 L1701,543.7 L1702,543.7 L1703,543.7 L1704,543.5 L1705,543.3 L1706,543.0 L1707,543.3 L1708,543.5 L1709,543.7 L1710,543.7 L1711,543.7 L1712,543.7 L1713,543.7 L1714,543.7 L1715,543.7 L1716,543.7 L1717,543.7 L1718,543.7 L1719,543.7 L1720,543.7 L1721,543.7 L1722,543.7 L1723,543.7 L1724,543.7 L1725,543.7 L1726,543.7 L1727,543.5 L1728,543.3 L1729,543.0 L1730,543.3 L1731,543.5 L1732,543.7 L1733,543.7 L1734,543.7 L1735,543.7 L1736,543.7 L1737,543.7 L1738,543.7 L1739,543.7 L1740,543.7 L1741,543.7 L1742,543.7 L1743,543.7 L1744,543.7 L1745,543.7 L1746,543.7 L1747,543.7 L1748,543.7 L1749,543.7 L1750,534.8 L1751,528.4 L1752,528.4 L1753,537.2 L1754,537.2 L1755,541.0 L1756,540.4 L1757,541.4 L1758,543.0 L1759,542.2 L1760,542.4 L1761,543.2 L1762,543.4 L1763,543.2 L1764,543.5 L1765,543.7 L1766,543.7 L1767,543.7 L1768,543.7 L1769,543.7 L1770,543.7 L1771,543.7 L1772,538.8 L1773,535.0 L1774,535.0 L1775,540.2 L1776,540.2 L1777,542.4 L1778,542.1 L1779,542.7 L1780,543.6 L1781,543.2 L1782,543.3 L1783,543.7 L1784,543.7 L1785,543.7 L1786,543.7 L1787,543.7 L1788,543.7 L1789,543.7 L1790,543.7 L1791,543.7 L1792,543.7 L1793,543.7 L1794,543.7 L1795,542.8 L1796,542.8 L1797,542.8 L1798,542.8 L1799,542.8 L1800,542.8 L1801,542.8 L1802,542.8 L1803,542.8 L1804,542.8 L1805,542.8 L1806,542.8 L1807,542.8 L1808,542.8 L1809,542.8 L1810,542.8 L1811,542.8 L1812,542.8 L1813,542.8 L1814,542.8 L1815,542.8 L1816,542.8 L1817,543.7 L1818,534.8 L1819,528.4 L1820,528.4 L1821,537.2 L1822,537.2 L1823,541.0 L1824,540.4 L1825,541.4 L1826,543.0 L1827,542.2 L1828,542.4 L1829,543.2 L1830,543.4 L1831,543.2 L1832,543.5 L1833,543.7 L1834,543.7 L1835,543.7 L1836,543.7 L1837,543.7 L1838,543.7 L1839,543.7 L1840,543.7 L1841,543.7 L1842,543.7 L1843,543.7 L1844,543.7 L1845,543.7 L1846,543.7 L1847,543.7 L1848,543.7 L1849,543.7 L1850,543.7 L1851,543.7 L1852,543.7 L1853,543.7 L1854,543.7 L1855,543.7 L1856,543.7 L1857,543.7 L1858,543.7 L1859,543.7 L1860,543.7 L1861,543.7 L1862,538.8 L1863,535.0 L1864,535.0 L1865,540.2 L1866,540.2 L1867,542.4 L1868,542.1 L1869,542.7 L1870,543.6 L1871,543.2 L1872,543.3 L1873,543.7 L1874,543.7 L1875,543.7 L1876,543.7 L1877,543.7 L1878,543.7 L1879,543.7 L1880,543.7 L1881,543.7 L1882,543.7 L1883,543.7 L1884,543.5 L1885,543.3 L1886,543.0 L1887,543.3 L1888,543.5 L1889,543.7 L1890,543.7 L1891,543.7 L1892,543.7 L1893,543.7 L1894,543.7 L1895,543.7 L1896,543.7 L1897,543.7 L1898,543.7 L1899,543.7 L1900,543.7 L1901,543.7 L1902,543.7 L1903,543.7 L1904,543.7 L1905,543.7 L1906,543.7 L1907,543.7 L1908,543.5 L1909,543.3 L1910,543.0 L1911,543.3 L1912,543.5 L1913,543.7 L1914,543.7 L1915,543.7 L1916,543.7 L1917,543.7 L1918,543.7 L1919,543.7 L1920,543.7 L1921,543.7 L1922,543.7 L1923,543.7 L1924,543.7 L1925,543.7 L1926,543.7 L1927,543.7 L1928,543.7 L1929,543.7 L1930,534.8 L1931,528.4 L1932,528.4 L1933,537.2 L1934,537.2 L1935,541.0 L1936,540.4 L1937,541.4 L1938,543.0 L1939,542.2 L1940,542.4 L1941,543.2 L1942,543.4 L1943,543.2 L1944,543.5 L1945,543.7 L1946,543.7 L1947,543.7 L1948,543.7 L1949,543.7 L1950,543.7 L1951,543.7 L1952,539.4 L1953,536.0 L1954,536.0 L1955,540.7 L1956,540.7 L1957,542.6 L1958,542.3 L1959,542.8 L1960,543.7 L1961,543.3 L1962,543.4 L1963,543.7 L1964,543.7 L1965,543.7 L1966,543.7 L1967,543.7 L1968,543.7 L1969,543.7 L1970,543.7 L1971,543.7 L1972,543.7 L1973,543.7 L1974,543.7 L1975,543.7 L1976,535.4 L1977,529.3 L1978,529.3 L1979,537.7 L1980,537.7 L1981,541.2 L1982,540.6 L1983,541.6 L1984,543.1 L1985,542.4 L1986,542.5 L1987,543.3 L1988,543.4 L1989,543.3 L1990,543.6 L1991,543.7 L1992,543.7 L1993,543.7 L1994,543.7 L1995,543.7 L1996,543.7 L1997,543.7 L1998,543.7 L1999,534.8 L2000,528.4 L2001,528.4 L2002,537.2 L2003,537.2 L2004,541.0 L2005,540.4 L2006,541.4 L2007,543.0 L2008,542.2 L2009,542.4 L2010,543.2 L2011,543.4 L2012,543.2 L2013,543.5 L2014,543.7 L2015,543.7 L2016,543.7 L2017,543.7 L2018,543.7 L2019,543.7 L2020,543.7 L2021,543.7 L2022,543.7 L2023,543.7 L2024,543.7 L2025,543.7 L2026,543.7 L2027,543.7 L2028,543.7 L2029,543.7 L2030,543.7 L2031,543.7 L2032,543.7 L2033,543.7 L2034,543.7 L2035,543.7 L2036,543.7 L2037,543.7 L2038,543.7 L2039,543.7 L2040,543.7 L2041,543.7 L2042,543.7 L2043,537.1 L2044,532.1 L2045,532.1 L2046,538.9 L2047,538.9 L2048,541.8 L2049,541.4 L2050,542.1 L2051,543.3 L2052,542.8 L2053,542.9 L2054,543.5 L2055,543.6 L2056,543.5 L2057,543.7 L2058,543.7 L2059,543.7 L2060,543.7 L2061,543.7 L2062,543.5 L2063,543.3 L2064,543.0 L2065,543.3 L2066,543.5 L2067,543.7 L2068,543.7 L2069,543.7 L2070,543.7 L2071,543.7 L2072,543.7 L2073,543.7 L2074,543.7 L2075,543.7 L2076,543.7 L2077,543.7 L2078,543.7 L2079,543.7 L2080,543.7 L2081,543.7 L2082,543.7 L2083,543.7 L2084,543.7 L2085,543.7 L2086,543.7 L2087,543.7 L2088,543.5 L2089,543.3 L2090,543.0 L2091,543.3 L2092,543.5 L2093,543.7 L2094,543.7 L2095,543.7 L2096,543.7 L2097,543.7 L2098,543.7 L2099,543.7 L2100,543.7 L2101,543.7 L2102,543.7 L2103,543.7 L2104,543.7 L2105,543.7 L2106,543.7 L2107,543.7 L2108,543.7 L2109,543.7 L2110,543.7 L2111,543.7 L2112,543.7 L2113,543.7 L2114,543.7 L2115,543.7 L2116,543.7 L2117,543.7 L2118,543.7 L2119,543.7 L2120,543.7 L2121,543.7 L2122,543.7 L2123,543.7 L2124,543.7 L2125,543.7 L2126,543.7 L2127,543.7 L2128,543.7 L2129,543.7 L2130,543.7 L2131,543.7 L2132,537.7 L2133,533.1 L2134,533.1 L2135,539.4 L2136,539.4 L2137,542.0 L2138,541.6 L2139,542.3 L2140,543.4 L2141,542.9 L2142,543.0 L2143,543.6 L2144,543.7 L2145,543.6 L2146,543.7 L2147,543.7 L2148,543.7 L2149,543.7 L2150,543.7 L2151,543.7 L2152,543.7 L2153,543.7 L2154,543.7 L2155,542.8 L2156,542.8 L2157,542.8 L2158,542.8 L2159,542.8 L2160,542.8 L2161,542.8 L2162,542.8 L2163,542.8 L2164,542.8 L2165,542.8 L2166,542.8 L2167,542.8 L2168,542.8 L2169,542.8 L2170,542.8 L2171,542.8 L2172,542.8 L2173,542.8 L2174,542.8 L2175,542.8 L2176,542.8 L2177,543.7 L2178,534.8 L2179,528.4 L2180,528.4 L2181,537.2 L2182,537.2 L2183,541.0 L2184,540.4 L2185,541.4 L2186,543.0 L2187,542.2 L2188,542.4 L2189,543.2 L2190,543.4 L2191,543.2 L2192,543.5 L2193,543.7 L2194,543.7 L2195,543.7 L2196,543.7 L2197,543.7 L2198,543.7 L2199,543.7 L2200,543.7 L2201,543.7 L2202,543.7 L2203,543.7 L2204,543.7 L2205,543.7 L2206,543.7 L2207,543.7 L2208,543.7 L2209,543.7 L2210,543.7 L2211,543.7 L2212,543.7 L2213,543.7 L2214,543.7 L2215,543.7 L2216,543.7 L2217,543.7 L2218,543.7 L2219,543.7 L2220,543.7 L2221,543.7 L2222,543.7 L2223,537.1 L2224,532.1 L2225,532.1 L2226,538.9 L2227,538.9 L2228,541.8 L2229,541.4 L2230,542.1 L2231,543.3 L2232,542.8 L2233,542.9 L2234,543.5 L2235,543.6 L2236,543.5 L2237,543.7 L2238,543.7 L2239,543.7 L2240,543.7 L2241,543.7 L2242,543.7 L2243,543.7 L2244,543.5 L2245,543.3 L2246,543.0 L2247,543.3 L2248,543.5 L2249,543.7 L2250,543.7 L2251,543.7 L2252,543.7 L2253,543.7 L2254,543.7 L2255,543.7 L2256,543.7 L2257,543.7 L2258,543.7 L2259,543.7 L2260,543.7 L2261,543.7 L2262,543.7 L2263,543.7 L2264,543.7 L2265,543.7 L2266,543.7 L2267,543.7 L2268,543.7 L2269,543.5 L2270,543.3 L2271,543.0 L2272,543.3 L2273,543.5 L2274,543.7 L2275,543.7 L2276,543.7 L2277,543.7 L2278,543.7 L2279,543.7 L2280,543.7 L2281,543.7 L2282,543.7 L2283,543.7 L2284,543.7 L2285,543.7 L2286,543.7 L2287,543.7 L2288,543.7 L2289,543.7 L2290,543.7 L2291,534.8 L2292,528.4 L2293,528.4 L2294,537.2 L2295,537.2 L2296,541.0 L2297,540.4 L2298,541.4 L2299,543.0 L2300,542.2 L2301,542.4 L2302,543.2 L2303,543.4 L2304,543.2 L2305,543.5 L2306,543.7 L2307,543.7 L2308,543.7 L2309,543.7 L2310,543.7 L2311,543.7 L2312,543.7 L2313,543.7 L2314,539.4 L2315,536.0 L2316,536.0 L2317,540.7 L2318,540.7 L2319,542.6 L2320,542.3 L2321,542.8 L2322,543.7 L2323,543.3 L2324,543.4 L2325,543.7 L2326,543.7 L2327,543.7 L2328,543.7 L2329,543.7 L2330,543.7 L2331,543.7 L2332,543.7 L2333,543.7 L2334,543.7 L2335,543.7 L2336,543.7 L2337,535.4 L2338,529.3 L2339,529.3 L2340,537.7 L2341,537.7 L2342,541.2 L2343,540.6 L2344,541.6 L2345,543.1 L2346,542.4 L2347,542.5 L2348,543.3 L2349,543.4 L2350,543.3 L2351,543.6 L2352,543.7 L2353,543.7 L2354,543.7 L2355,543.7 L2356,543.7 L2357,543.7 L2358,543.7 L2359,534.8 L2360,528.4 L2361,528.4 L2362,537.2 L2363,537.2 L2364,541.0 L2365,540.4 L2366,541.4 L2367,543.0 L2368,542.2 L2369,542.4 L2370,543.2 L2371,543.4 L2372,543.2 L2373,543.5 L2374,543.7 L2375,543.7 L2376,543.7 L2377,543.7 L2378,543.7 L2379,543.7 L2380,543.7 L2381,543.7 L2382,543.7 L2383,543.7 L2384,543.7 L2385,543.7 L2386,543.7 L2387,543.7 L2388,543.7 L2389,543.7 L2390,543.7 L2391,543.7 L2392,543.7 L2393,543.7 L2394,543.7 L2395,543.7 L2396,543.7 L2397,543.7 L2398,543.7 L2399,543.7 L2400,543.7 L2400,545.3 L2399,545.3 L2398,545.3 L2397,545.3 L2396,545.3 L2395,545.3 L2394,545.3 L2393,545.3 L2392,545.3 L2391,545.3 L2390,545.3 L2389,545.3 L2388,545.3 L2387,545.3 L2386,545.3 L2385,545.3 L2384,545.3 L2383,545.3 L2382,545.3 L2381,545.3 L2380,545.3 L2379,545.3 L2378,545.3 L2377,545.3 L2376,545.3 L2375,545.3 L2374,545.3 L2373,545.5 L2372,545.9 L2371,545.7 L2370,545.8 L2369,546.7 L2368,546.9 L2367,546.1 L2366,547.8 L2365,548.8 L2364,548.2 L2363,552.1 L2362,552.1 L2361,561.5 L2360,561.5 L2359,554.7 L2358,545.3 L2357,545.3 L2356,545.3 L2355,545.3 L2354,545.3 L2353,545.3 L2352,545.3 L2351,545.5 L2350,545.8 L2349,545.6 L2348,545.8 L2347,546.6 L2346,546.7 L2345,546.0 L2344,547.6 L2343,548.6 L2342,548.0 L2341,551.7 L2340,551.7 L2339,560.5 L2338,560.5 L2337,554.1 L2336,545.3 L2335,545.3 L2334,545.3 L2333,545.3 L2332,545.3 L2331,545.3 L2330,545.3 L2329,545.3 L2328,545.3 L2327,545.3 L2326,545.3 L2325,545.3 L2324,545.7 L2323,545.8 L2322,545.3 L2321,546.2 L2320,546.8 L2319,546.5 L2318,548.5 L2317,548.5 L2316,553.5 L2315,553.5 L2314,549.9 L2313,545.3 L2312,545.3 L2311,545.3 L2310,545.3 L2309,545.3 L2308,545.3 L2307,545.3 L2306,545.3 L2305,545.5 L2304,545.9 L2303,545.7 L2302,545.8 L2301,546.7 L2300,546.9 L2299,546.1 L2298,547.8 L2297,548.8 L2296,548.2 L2295,552.1 L2294,552.1 L2293,561.5 L2292,561.5 L2291,554.7 L2290,545.3 L2289,545.3 L2288,545.3 L2287,545.3 L2286,545.3 L2285,545.3 L2284,545.3 L2283,545.3 L2282,545.3 L2281,545.3 L2280,545.3 L2279,545.3 L2278,545.3 L2277,545.3 L2276,545.3 L2275,545.3 L2274,545.3 L2273,545.5 L2272,545.8 L2271,546.1 L2270,545.8 L2269,545.5 L2268,545.3 L2267,545.3 L2266,545.3 L2265,545.3 L2264,545.3 L2263,545.3 L2262,545.3 L2261,545.3 L2260,545.3 L2259,545.3 L2258,545.3 L2257,545.3 L2256,545.3 L2255,545.3 L2254,545.3 L2253,545.3 L2252,545.3 L2251,545.3 L2250,545.3 L2249,545.3 L2248,545.5 L2247,545.8 L2246,546.1 L2245,545.8 L2244,545.5 L2243,545.3 L2242,545.3 L2241,545.3 L2240,545.3 L2239,545.3 L2238,545.3 L2237,545.3 L2236,545.5 L2235,545.4 L2234,545.5 L2233,546.2 L2232,546.3 L2231,545.7 L2230,547.0 L2229,547.8 L2228,547.4 L2227,550.4 L2226,550.4 L2225,557.5 L2224,557.5 L2223,552.3 L2222,545.3 L2221,545.3 L2220,545.3 L2219,545.3 L2218,545.3 L2217,545.3 L2216,545.3 L2215,545.3 L2214,545.3 L2213,545.3 L2212,545.3 L2211,545.3 L2210,545.3 L2209,545.3 L2208,545.3 L2207,545.3 L2206,545.3 L2205,545.3 L2204,545.3 L2203,545.3 L2202,545.3 L2201,545.3 L2200,545.3 L2199,545.3 L2198,545.3 L2197,545.3 L2196,545.3 L2195,545.3 L2194,545.3 L2193,545.3 L2192,545.5 L2191,545.9 L2190,545.7 L2189,545.8 L2188,546.7 L2187,546.9 L2186,546.1 L2185,547.8 L2184,548.8 L2183,548.2 L2182,552.1 L2181,552.1 L2180,561.5 L2179,561.5 L2178,554.7 L2177,545.3 L2176,546.3 L2175,546.3 L2174,546.3 L2173,546.3 L2172,546.3 L2171,546.3 L2170,546.3 L2169,546.3 L2168,546.3 L2167,546.3 L2166,546.3 L2165,546.3 L2164,546.3 L2163,546.3 L2162,546.3 L2161,546.3 L2160,546.3 L2159,546.3 L2158,546.3 L2157,546.3 L2156,546.3 L2155,546.3 L2154,545.3 L2153,545.3 L2152,545.3 L2151,545.3 L2150,545.3 L2149,545.3 L2148,545.3 L2147,545.3 L2146,545.3 L2145,545.5 L2144,545.3 L2143,545.4 L2142,546.1 L2141,546.2 L2140,545.6 L2139,546.8 L2138,547.6 L2137,547.1 L2136,549.9 L2135,549.9 L2134,556.5 L2133,556.5 L2132,551.7 L2131,545.3 L2130,545.3 L2129,545.3 L2128,545.3 L2127,545.3 L2126,545.3 L2125,545.3 L2124,545.3 L2123,545.3 L2122,545.3 L2121,545.3 L2120,545.3 L2119,545.3 L2118,545.3 L2117,545.3 L2116,545.3 L2115,545.3 L2114,545.3 L2113,545.3 L2112,545.3 L2111,545.3 L2110,545.3 L2109,545.3 L2108,545.3 L2107,545.3 L2106,545.3 L2105,545.3 L2104,545.3 L2103,545.3 L2102,545.3 L2101,545.3 L2100,545.3 L2099,545.3 L2098,545.3 L2097,545.3 L2096,545.3 L2095,545.3 L2094,545.3 L2093,545.3 L2092,545.5 L2091,545.8 L2090,546.1 L2089,545.8 L2088,545.5 L2087,545.3 L2086,545.3 L2085,545.3 L2084,545.3 L2083,545.3 L2082,545.3 L2081,545.3 L2080,545.3 L2079,545.3 L2078,545.3 L2077,545.3 L2076,545.3 L2075,545.3 L2074,545.3 L2073,545.3 L2072,545.3 L2071,545.3 L2070,545.3 L2069,545.3 L2068,545.3 L2067,545.3 L2066,545.5 L2065,545.8 L2064,546.1 L2063,545.8 L2062,545.5 L2061,545.3 L2060,545.3 L2059,545.3 L2058,545.3 L2057,545.3 L2056,545.5 L2055,545.4 L2054,545.5 L2053,546.2 L2052,546.3 L2051,545.7 L2050,547.0 L2049,547.8 L2048,547.4 L2047,550.4 L2046,550.4 L2045,557.5 L2044,557.5 L2043,552.3 L2042,545.3 L2041,545.3 L2040,545.3 L2039,545.3 L2038,545.3 L2037,545.3 L2036,545.3 L2035,545.3 L2034,545.3 L2033,545.3 L2032,545.3 L2031,545.3 L2030,545.3 L2029,545.3 L2028,545.3 L2027,545.3 L2026,545.3 L2025,545.3 L2024,545.3 L2023,545.3 L2022,545.3 L2021,545.3 L2020,545.3 L2019,545.3 L2018,545.3 L2017,545.3 L2016,545.3 L2015,545.3 L2014,545.3 L2013,545.5 L2012,545.9 L2011,545.7 L2010,545.8 L2009,546.7 L2008,546.9 L2007,546.1 L2006,547.8 L2005,548.8 L2004,548.2 L2003,552.1 L2002,552.1 L2001,561.5 L2000,561.5 L1999,554.7 L1998,545.3 L1997,545.3 L1996,545.3 L1995,545.3 L1994,545.3 L1993,545.3 L1992,545.3 L1991,545.3 L1990,545.5 L1989,545.8 L1988,545.6 L1987,545.8 L1986,546.6 L1985,546.7 L1984,546.0 L1983,547.6 L1982,548.6 L1981,548.0 L1980,551.7 L1979,551.7 L1978,560.5 L1977,560.5 L1976,554.1 L1975,545.3 L1974,545.3 L1973,545.3 L1972,545.3 L1971,545.3 L1970,545.3 L1969,545.3 L1968,545.3 L1967,545.3 L1966,545.3 L1965,545.3 L1964,545.3 L1963,545.3 L1962,545.7 L1961,545.8 L1960,545.3 L1959,546.2 L1958,546.8 L1957,546.5 L1956,548.5 L1955,548.5 L1954,553.5 L1953,553.5 L1952,549.9 L1951,545.3 L1950,545.3 L1949,545.3 L1948,545.3 L1947,545.3 L1946,545.3 L1945,545.3 L1944,545.5 L1943,545.9 L1942,545.7 L1941,545.8 L1940,546.7 L1939,546.9 L1938,546.1 L1937,547.8 L1936,548.8 L1935,548.2 L1934,552.1 L1933,552.1 L1932,561.5 L1931,561.5 L1930,554.7 L1929,545.3 L1928,545.3 L1927,545.3 L1926,545.3 L1925,545.3 L1924,545.3 L1923,545.3 L1922,545.3 L1921,545.3 L1920,545.3 L1919,545.3 L1918,545.3 L1917,545.3 L1916,545.3 L1915,545.3 L1914,545.3 L1913,545.3 L1912,545.5 L1911,545.8 L1910,546.1 L1909,545.8 L1908,545.5 L1907,545.3 L1906,545.3 L1905,545.3 L1904,545.3 L1903,545.3 L1902,545.3 L1901,545.3 L1900,545.3 L1899,545.3 L1898,545.3 L1897,545.3 L1896,545.3 L1895,545.3 L1894,545.3 L1893,545.3 L1892,545.3 L1891,545.3 L1890,545.3 L1889,545.3 L1888,545.5 L1887,545.8 L1886,546.1 L1885,545.8 L1884,545.5 L1883,545.3 L1882,545.3 L1881,545.3 L1880,545.3 L1879,545.3 L1878,545.3 L1877,545.3 L1876,545.3 L1875,545.3 L1874,545.3 L1873,545.3 L1872,545.8 L1871,545.9 L1870,545.4 L1869,546.4 L1868,547.1 L1867,546.7 L1866,549.0 L1865,549.0 L1864,554.5 L1863,554.5 L1862,550.5 L1861,545.3 L1860,545.3 L1859,545.3 L1858,545.3 L1857,545.3 L1856,545.3 L1855,545.3 L1854,545.3 L1853,545.3 L1852,545.3 L1851,545.3 L1850,545.3 L1849,545.3 L1848,545.3 L1847,545.3 L1846,545.3 L1845,545.3 L1844,545.3 L1843,545.3 L1842,545.3 L1841,545.3 L1840,545.3 L1839,545.3 L1838,545.3 L1837,545.3 L1836,545.3 L1835,545.3 L1834,545.3 L1833,545.3 L1832,545.5 L1831,545.9 L1830,545.7 L1829,545.8 L1828,546.7 L1827,546.9 L1826,546.1 L1825,547.8 L1824,548.8 L1823,548.2 L1822,552.1 L1821,552.1 L1820,561.5 L1819,561.5 L1818,554.7 L1817,545.3 L1816,546.3 L1815,546.3 L1814,546.3 L1813,546.3 L1812,546.3 L1811,546.3 L1810,546.3 L1809,546.3 L1808,546.3 L1807,546.3 L1806,546.3 L1805,546.3 L1804,546.3 L1803,546.3 L1802,546.3 L1801,546.3 L1800,546.3 L1799,546.3 L1798,546.3 L1797,546.3 L1796,546.3 L1795,546.3 L1794,545.3 L1793,545.3 L1792,545.3 L1791,545.3 L1790,545.3 L1789,545.3 L1788,545.3 L1787,545.3 L1786,545.3 L1785,545.3 L1784,545.3 L1783,545.3 L1782,545.8 L1781,545.9 L1780,545.4 L1779,546.4 L1778,547.1 L1777,546.7 L1776,549.0 L1775,549.0 L1774,554.5 L1773,554.5 L1772,550.5 L1771,545.3 L1770,545.3 L1769,545.3 L1768,545.3 L1767,545.3 L1766,545.3 L1765,545.3 L1764,545.5 L1763,545.9 L1762,545.7 L1761,545.8 L1760,546.7 L1759,546.9 L1758,546.1 L1757,547.8 L1756,548.8 L1755,548.2 L1754,552.1 L1753,552.1 L1752,561.5 L1751,561.5 L1750,554.7 L1749,545.3 L1748,545.3 L1747,545.3 L1746,545.3 L1745,545.3 L1744,545.3 L1743,545.3 L1742,545.3 L1741,545.3 L1740,545.3 L1739,545.3 L1738,545.3 L1737,545.3 L1736,545.3 L1735,545.3 L1734,545.3 L1733,545.3 L1732,545.3 L1731,545.5 L1730,545.8 L1729,546.1 L1728,545.8 L1727,545.5 L1726,545.3 L1725,545.3 L1724,545.3 L1723,545.3 L1722,545.3 L1721,545.3 L1720,545.3 L1719,545.3 L1718,545.3 L1717,545.3 L1716,545.3 L1715,545.3 L1714,545.3 L1713,545.3 L1712,545.3 L1711,545.3 L1710,545.3 L1709,545.3 L1708,545.5 L1707,545.8 L1706,546.1 L1705,545.8 L1704,545.5 L1703,545.3 L1702,545.3 L1701,545.3 L1700,545.3 L1699,545.3 L1698,545.3 L1697,545.3 L1696,545.3 L1695,545.3 L1694,545.3 L1693,545.3 L1692,545.8 L1691,545.9 L1690,545.4 L1689,546.4 L1688,547.1 L1687,546.7 L1686,549.0 L1685,549.0 L1684,554.5 L1683,554.5 L1682,550.5 L1681,545.3 L1680,545.3 L1679,545.3 L1678,545.3 L1677,545.3 L1676,545.3 L1675,545.3 L1674,545.3 L1673,545.3 L1672,545.3 L1671,545.3 L1670,545.3 L1669,545.3 L1668,545.3 L1667,545.3 L1666,545.3 L1665,545.3 L1664,545.3 L1663,545.3 L1662,545.3 L1661,545.3 L1660,545.3 L1659,545.3 L1658,545.3 L1657,545.3 L1656,545.3 L1655,545.3 L1654,545.3 L1653,545.3 L1652,545.3 L1651,545.5 L1650,545.9 L1649,545.7 L1648,545.8 L1647,546.7 L1646,546.9 L1645,546.1 L1644,547.8 L1643,548.8 L1642,548.2 L1641,552.1 L1640,552.1 L1639,561.5 L1638,561.5 L1637,554.7 L1636,545.3 L1635,545.3 L1634,545.3 L1633,545.3 L1632,545.3 L1631,545.3 L1630,545.3 L1629,545.5 L1628,545.9 L1627,545.7 L1626,545.8 L1625,546.7 L1624,546.9 L1623,546.1 L1622,547.8 L1621,548.8 L1620,548.2 L1619,552.1 L1618,552.1 L1617,561.5 L1616,561.5 L1615,554.7 L1614,545.3 L1613,545.3 L1612,545.3 L1611,545.3 L1610,545.3 L1609,545.3 L1608,545.3 L1607,545.3 L1606,545.3 L1605,545.3 L1604,545.3 L1603,545.3 L1602,545.7 L1601,545.8 L1600,545.3 L1599,546.2 L1598,546.8 L1597,546.5 L1596,548.5 L1595,548.5 L1594,553.5 L1593,553.5 L1592,549.9 L1591,545.3 L1590,545.3 L1589,545.3 L1588,545.3 L1587,545.3 L1586,545.3 L1585,545.3 L1584,545.3 L1583,545.5 L1582,545.9 L1581,545.7 L1580,545.8 L1579,546.7 L1578,546.9 L1577,546.1 L1576,547.8 L1575,548.8 L1574,548.2 L1573,552.1 L1572,552.1 L1571,561.5 L1570,561.5 L1569,554.7 L1568,545.3 L1567,545.3 L1566,545.3 L1565,545.3 L1564,545.3 L1563,545.3 L1562,545.3 L1561,545.3 L1560,545.3 L1559,545.3 L1558,545.3 L1557,545.3 L1556,545.3 L1555,545.3 L1554,545.3 L1553,545.3 L1552,545.3 L1551,545.5 L1550,545.8 L1549,546.1 L1548,545.8 L1547,545.5 L1546,545.3 L1545,545.3 L1544,545.3 L1543,545.3 L1542,545.3 L1541,545.3 L1540,545.3 L1539,545.3 L1538,545.3 L1537,545.3 L1536,545.3 L1535,545.3 L1534,545.3 L1533,545.3 L1532,545.3 L1531,545.3 L1530,545.3 L1529,545.3 L1528,545.3 L1527,545.5 L1526,545.8 L1525,546.1 L1524,545.8 L1523,545.5 L1522,545.3 L1521,545.3 L1520,545.3 L1519,545.3 L1518,545.3 L1517,545.3 L1516,545.3 L1515,545.3 L1514,545.5 L1513,545.3 L1512,545.4 L1511,546.1 L1510,546.2 L1509,545.6 L1508,546.8 L1507,547.6 L1506,547.1 L1505,549.9 L1504,549.9 L1503,556.5 L1502,556.5 L1501,551.7 L1500,545.3 L1499,545.3 L1498,545.3 L1497,545.3 L1496,545.3 L1495,545.3 L1494,545.3 L1493,545.3 L1492,545.3 L1491,545.3 L1490,545.3 L1489,545.3 L1488,545.3 L1487,545.3 L1486,545.3 L1485,545.3 L1484,545.3 L1483,545.3 L1482,545.3 L1481,545.5 L1480,545.8 L1479,546.1 L1478,545.8 L1477,545.5 L1476,545.3 L1475,545.3 L1474,545.3 L1473,545.3 L1472,545.3 L1471,545.3 L1470,545.5 L1469,545.9 L1468,545.7 L1467,545.8 L1466,546.7 L1465,546.9 L1464,546.1 L1463,547.8 L1462,548.8 L1461,548.2 L1460,552.1 L1459,552.1 L1458,561.5 L1457,561.5 L1456,554.7 L1455,545.3 Z" fill="#62dba4"/><rect x="390" y="658.1" width="2010" height="1.2" fill="#e6ae58" opacity="0.9"/><path d="M390,657 L414,657.2 L424,657.8 L458,658.2 L458,659 L424,659.5 L414,660 L390,660.3 Z" fill="#f7b23c"/></svg>
</div>
<div class="abs" style="left:386px;top:136px;width:4px;height:112px;background:#a033e6"></div>
<div class="abs" style="left:869px;top:679px;width:231px;height:13px;border-radius:7px;background:#b39f78"></div>
<div class="abs" style="left:2382.3px;top:136.3px;width:12px;height:459px;border-radius:6px;background:rgba(255,255,255,0.34)"></div>
<div class="abs" style="left:2px;top:697px;width:2398px;height:270px;background:#16191c"></div>
<svg class="abs" style="left:17px;top:717px" width="18" height="16" viewBox="0 0 18 16"><path d="M2.2 1.8 L15.8 14.2 M15.8 1.8 L2.2 14.2" stroke="#fff" stroke-width="3.4" stroke-linecap="round"/></svg>
<span class="t" style="left:53px;top:716px;font-size:19.5px;color:#f0f0f0">Lead Vocal</span>
<span class="t" style="left:150px;top:773px;font-size:21px;color:#fff"><i style="font-size:19px">Fx</i> <b style="font-size:20.6px">Preset</b></span>
<div class="abs" style="left:145.5px;top:809px;width:99px;height:100px;border-radius:7px;overflow:hidden;background:#2a1d18">
<svg width="99" height="100" viewBox="0 0 100 100" preserveAspectRatio="none"><defs><filter id="bl2" x="-50%" y="-50%" width="200%" height="200%"><feGaussianBlur stdDeviation="0.8"/></filter><radialGradient id="g1" cx="44%" cy="46%" r="52%"><stop offset="0" stop-color="#4d3721"/><stop offset="0.45" stop-color="#3a291c"/><stop offset="1" stop-color="#2a1d18"/></radialGradient><radialGradient id="g2"><stop offset="0" stop-color="#fff0b8"/><stop offset="0.3" stop-color="#eeb050" stop-opacity=".85"/><stop offset="1" stop-color="#b07028" stop-opacity="0"/></radialGradient><radialGradient id="g5" cx="50%" cy="50%" r="50%"><stop offset="0" stop-color="#b87c30" stop-opacity=".55"/><stop offset="1" stop-color="#b87c30" stop-opacity="0"/></radialGradient><linearGradient id="g3" x1="0" y1="0" x2="0" y2="1"><stop offset="0" stop-color="#271a17" stop-opacity=".9"/><stop offset=".3" stop-color="#271a17" stop-opacity="0"/><stop offset=".68" stop-color="#2b211b" stop-opacity="0"/><stop offset=".8" stop-color="#2b211b" stop-opacity=".85"/><stop offset="1" stop-color="#2b211b" stop-opacity=".95"/></linearGradient><linearGradient id="g6" x1="0" y1="0" x2="1" y2="0"><stop offset="0" stop-color="#241916" stop-opacity=".8"/><stop offset=".16" stop-color="#241916" stop-opacity="0"/><stop offset=".6" stop-color="#241916" stop-opacity="0"/><stop offset=".78" stop-color="#281c18" stop-opacity=".7"/><stop offset="1" stop-color="#281c18" stop-opacity=".85"/></linearGradient></defs><rect width="100" height="100" fill="url(#g1)"/><ellipse cx="36" cy="47" rx="9" ry="30" transform="rotate(-37 36 47)" fill="url(#g5)"/><rect width="100" height="100" fill="url(#g6)"/><rect width="100" height="100" fill="url(#g3)"/><g filter="url(#bl2)"><circle cx="19.6" cy="26.7" r="5.5" fill="url(#g2)"/><circle cx="31" cy="42" r="4.4" fill="url(#g2)"/><circle cx="37" cy="51" r="3.4" fill="url(#g2)"/><ellipse cx="24.7" cy="63" rx="2.2" ry="4.4" fill="url(#g2)"/><ellipse cx="49" cy="68.5" rx="5" ry="2" fill="url(#g2)" opacity=".6"/></g></svg></div>
<svg class="abs" style="left:100px;top:848px" width="16" height="22" viewBox="0 0 16 22" fill="none" stroke="#8b8ea0" stroke-width="3.4" stroke-linecap="round" stroke-linejoin="round"><path d="M12.5 2.5 L3.5 11 L12.5 19.5"/></svg>
<svg class="abs" style="left:273px;top:848px" width="16" height="22" viewBox="0 0 16 22" fill="none" stroke="#8b8ea0" stroke-width="3.4" stroke-linecap="round" stroke-linejoin="round"><path d="M3.5 2.5 L12.5 11 L3.5 19.5"/></svg>
<div class="abs" style="left:17px;top:921px;width:357px;height:43px;border-radius:22px;background:#1f2427"><span class="t" style="left:24px;top:12px;font-size:19px;color:#d8d9da">BCHILL MUSIC Drill Vocal Preset</span><svg class="abs" style="left:320px;top:17px" width="14" height="10" viewBox="0 0 14 10" fill="none" stroke="#fff" stroke-width="2.2" stroke-linecap="round" stroke-linejoin="round"><path d="M1.5 2 L7 7.5 L12.5 2"/></svg></div>
<div class="abs" style="left:390.6px;top:752.8px;width:1807.4px;height:230px;border-radius:9px;background:#1e2225"></div>
<div class="abs" style="left:417.3px;top:758.5px;width:417px;height:220px;border-radius:7px;background:#b2a99e"></div>
<div class="abs" style="left:433.5px;top:778px;width:42px;height:27px;border-radius:14px;background:#fff"><div class="abs" style="left:17px;top:2.5px;width:22px;height:22px;border-radius:50%;background:#181a1d"></div></div>
<span class="t" style="left:477.1px;width:300px;text-align:center;top:781px;font-size:21px;font-weight:bold;color:#141414">Graphic EQ</span>
<svg class="abs" style="left:792.7px;top:784px" width="16" height="16" viewBox="0 0 16 16"><path d="M2.5 2.5 L13.5 13.5 M13.5 2.5 L2.5 13.5" stroke="#141414" stroke-width="2.6" stroke-linecap="round"/></svg>
<span class="t" style="left:433px;top:846px;font-size:15px;font-weight:bold;color:#1a1a1a;letter-spacing:-.3px">+15</span>
<span class="t" style="left:448px;top:905px;font-size:15px;font-weight:bold;color:#1a1a1a">0</span>
<div class="abs" style="left:442px;top:875px;width:17px;height:2px;background:#1a1a1a"></div>
<div class="abs" style="left:442px;top:888.3px;width:17px;height:2px;background:#1a1a1a"></div>
<div class="abs" style="left:442px;top:934.5px;width:17px;height:2px;background:#1a1a1a"></div>
<div class="abs" style="left:442px;top:948px;width:17px;height:2px;background:#1a1a1a"></div>
<div class="abs" style="left:442px;top:966px;width:17px;height:2px;background:#1a1a1a;opacity:.5"></div>
<div class="abs" style="left:484.9px;top:836px;width:16.6px;height:150px;border-radius:8.3px;background:linear-gradient(90deg,#a0978c,#9b9288 50%,#a39a8f)"></div>
<div class="abs" style="left:479.2px;top:895px;width:28px;height:44.5px;border-radius:5px;background:linear-gradient(180deg,#d9d9d9 0%,#ececec 20%,#ffffff 50%,#ffffff 85%,#e6e3df 100%);box-shadow:0 2px 4px rgba(60,50,40,.35),0 0 2px rgba(60,50,40,.25)"><div class="abs" style="left:5.5px;top:20.5px;width:17px;height:2.2px;background:#1c1c1c"></div></div>
<div class="abs" style="left:534.9px;top:836px;width:16.6px;height:150px;border-radius:8.3px;background:linear-gradient(90deg,#a0978c,#9b9288 50%,#a39a8f)"></div>
<div class="abs" style="left:529.2px;top:893.8px;width:28px;height:44.5px;border-radius:5px;background:linear-gradient(180deg,#d9d9d9 0%,#ececec 20%,#ffffff 50%,#ffffff 85%,#e6e3df 100%);box-shadow:0 2px 4px rgba(60,50,40,.35),0 0 2px rgba(60,50,40,.25)"><div class="abs" style="left:5.5px;top:20.5px;width:17px;height:2.2px;background:#1c1c1c"></div></div>
<div class="abs" style="left:585.4px;top:836px;width:16.6px;height:150px;border-radius:8.3px;background:linear-gradient(90deg,#a0978c,#9b9288 50%,#a39a8f)"></div>
<div class="abs" style="left:579.7px;top:893.8px;width:28px;height:44.5px;border-radius:5px;background:linear-gradient(180deg,#d9d9d9 0%,#ececec 20%,#ffffff 50%,#ffffff 85%,#e6e3df 100%);box-shadow:0 2px 4px rgba(60,50,40,.35),0 0 2px rgba(60,50,40,.25)"><div class="abs" style="left:5.5px;top:20.5px;width:17px;height:2.2px;background:#1c1c1c"></div></div>
<div class="abs" style="left:635.4px;top:836px;width:16.6px;height:150px;border-radius:8.3px;background:linear-gradient(90deg,#a0978c,#9b9288 50%,#a39a8f)"></div>
<div class="abs" style="left:629.7px;top:887.2px;width:28px;height:44.5px;border-radius:5px;background:linear-gradient(180deg,#d9d9d9 0%,#ececec 20%,#ffffff 50%,#ffffff 85%,#e6e3df 100%);box-shadow:0 2px 4px rgba(60,50,40,.35),0 0 2px rgba(60,50,40,.25)"><div class="abs" style="left:5.5px;top:20.5px;width:17px;height:2.2px;background:#1c1c1c"></div></div>
<div class="abs" style="left:686.1px;top:836px;width:16.6px;height:150px;border-radius:8.3px;background:linear-gradient(90deg,#a0978c,#9b9288 50%,#a39a8f)"></div>
<div class="abs" style="left:680.4px;top:888.4px;width:28px;height:44.5px;border-radius:5px;background:linear-gradient(180deg,#d9d9d9 0%,#ececec 20%,#ffffff 50%,#ffffff 85%,#e6e3df 100%);box-shadow:0 2px 4px rgba(60,50,40,.35),0 0 2px rgba(60,50,40,.25)"><div class="abs" style="left:5.5px;top:20.5px;width:17px;height:2.2px;background:#1c1c1c"></div></div>
<div class="abs" style="left:736.3px;top:836px;width:16.6px;height:150px;border-radius:8.3px;background:linear-gradient(90deg,#a0978c,#9b9288 50%,#a39a8f)"></div>
<div class="abs" style="left:730.6px;top:884.8px;width:28px;height:44.5px;border-radius:5px;background:linear-gradient(180deg,#d9d9d9 0%,#ececec 20%,#ffffff 50%,#ffffff 85%,#e6e3df 100%);box-shadow:0 2px 4px rgba(60,50,40,.35),0 0 2px rgba(60,50,40,.25)"><div class="abs" style="left:5.5px;top:20.5px;width:17px;height:2.2px;background:#1c1c1c"></div></div>
<div class="abs" style="left:787.0px;top:836px;width:16.6px;height:150px;border-radius:8.3px;background:linear-gradient(90deg,#a0978c,#9b9288 50%,#a39a8f)"></div>
<div class="abs" style="left:781.3px;top:888.4px;width:28px;height:44.5px;border-radius:5px;background:linear-gradient(180deg,#d9d9d9 0%,#ececec 20%,#ffffff 50%,#ffffff 85%,#e6e3df 100%);box-shadow:0 2px 4px rgba(60,50,40,.35),0 0 2px rgba(60,50,40,.25)"><div class="abs" style="left:5.5px;top:20.5px;width:17px;height:2.2px;background:#1c1c1c"></div></div>
<div class="abs" style="left:846px;top:758.5px;width:360px;height:220px;border-radius:8px;background:#16191c"></div>
<div class="abs" style="left:862px;top:778px;width:42px;height:27px;border-radius:14px;background:#fff"><div class="abs" style="left:17px;top:2.5px;width:22px;height:22px;border-radius:50%;background:#181a1d"></div></div>
<span class="t" style="left:877.3499999999999px;width:300px;text-align:center;top:782px;font-size:20.3px;font-weight:bold;color:#fff">FBK Compressor</span>
<svg class="abs" style="left:1164.9px;top:784px" width="16" height="16" viewBox="0 0 16 16"><path d="M2.5 2.5 L13.5 13.5 M13.5 2.5 L2.5 13.5" stroke="#fff" stroke-width="2.6" stroke-linecap="round"/></svg>
<div class="abs" style="left:1218px;top:758.5px;width:276.5px;height:220px;border-radius:8px;background:#16191c"></div>
<div class="abs" style="left:1233.7px;top:778px;width:42px;height:27px;border-radius:14px;background:#fff"><div class="abs" style="left:17px;top:2.5px;width:22px;height:22px;border-radius:50%;background:#181a1d"></div></div>
<span class="t" style="left:1207.2px;width:300px;text-align:center;top:781px;font-size:21px;font-weight:bold;color:#fff">Stereowise</span>
<svg class="abs" style="left:1454px;top:784px" width="16" height="16" viewBox="0 0 16 16"><path d="M2.5 2.5 L13.5 13.5 M13.5 2.5 L2.5 13.5" stroke="#fff" stroke-width="2.6" stroke-linecap="round"/></svg>
<div class="abs" style="left:1506px;top:758.5px;width:334px;height:220px;border-radius:8px;background:#16191c"></div>
<div class="abs" style="left:1523px;top:778px;width:42px;height:27px;border-radius:14px;background:#fff"><div class="abs" style="left:17px;top:2.5px;width:22px;height:22px;border-radius:50%;background:#181a1d"></div></div>
<span class="t" style="left:1524.65px;width:300px;text-align:center;top:781px;font-size:21.8px;font-weight:bold;color:#fff">Noise Gate</span>
<svg class="abs" style="left:1798.4px;top:784px" width="16" height="16" viewBox="0 0 16 16"><path d="M2.5 2.5 L13.5 13.5 M13.5 2.5 L2.5 13.5" stroke="#fff" stroke-width="2.6" stroke-linecap="round"/></svg>
<div class="abs" style="left:1850.5px;top:758.5px;width:333.5px;height:220px;border-radius:8px;background:#16191c"></div>
<div class="abs" style="left:1867.3px;top:778px;width:42px;height:27px;border-radius:14px;background:#fff"><div class="abs" style="left:17px;top:2.5px;width:22px;height:22px;border-radius:50%;background:#181a1d"></div></div>
<span class="t" style="left:1868.5px;width:300px;text-align:center;top:781px;font-size:21px;font-weight:bold;color:#fff">Studio Reverb</span>
<svg class="abs" style="left:2142.8px;top:784px" width="16" height="16" viewBox="0 0 16 16"><path d="M2.5 2.5 L13.5 13.5 M13.5 2.5 L2.5 13.5" stroke="#fff" stroke-width="2.6" stroke-linecap="round"/></svg>
<svg class="abs" style="left:0;top:697px" width="2400" height="270" viewBox="0 697 2400 270"><defs><radialGradient id="rv" cx="50%" cy="62%" r="55%"><stop offset="0" stop-color="#2f1f18"/><stop offset="0.5" stop-color="#251b18"/><stop offset="1" stop-color="#17191c"/></radialGradient><clipPath id="ngc"><rect x="1506" y="759" width="334" height="208"/></clipPath></defs><path d="M896.86 919.81 A21.8 21.8 0 1 1 932.14 919.81" fill="none" stroke="#2d3034" stroke-width="4.4" stroke-linecap="round"/><path d="M896.43 919.19 A21.8 21.8 0 0 1 892.70 907.00" fill="none" stroke="#9a36df" stroke-width="5.2" stroke-linecap="round"/><circle cx="914.5" cy="907" r="15.7" fill="#fff"/><path d="M909.65 905.79 L901.40 903.73" stroke="#17191b" stroke-width="2.2" stroke-linecap="round"/><path d="M1007.96 919.81 A21.8 21.8 0 1 1 1043.24 919.81" fill="none" stroke="#2d3034" stroke-width="4.4" stroke-linecap="round"/><path d="M1007.53 919.19 A21.8 21.8 0 0 1 1005.39 898.83" fill="none" stroke="#9a36df" stroke-width="5.2" stroke-linecap="round"/><circle cx="1025.6" cy="907" r="15.7" fill="#fff"/><path d="M1021.19 904.65 L1013.68 900.66" stroke="#17191b" stroke-width="2.2" stroke-linecap="round"/><path d="M1118.66 919.81 A21.8 21.8 0 1 1 1153.94 919.81" fill="none" stroke="#2d3034" stroke-width="4.4" stroke-linecap="round"/><path d="M1118.23 919.19 A21.8 21.8 0 0 1 1126.07 887.75" fill="none" stroke="#9a36df" stroke-width="5.2" stroke-linecap="round"/><circle cx="1136.3" cy="907" r="15.7" fill="#fff"/><path d="M1134.03 902.54 L1130.17 894.97" stroke="#17191b" stroke-width="2.2" stroke-linecap="round"/><path d="M1330.67 925.69 A31.8 31.8 0 1 1 1382.13 925.69" fill="none" stroke="#2d3034" stroke-width="4.4" stroke-linecap="round"/><path d="M1330.04 924.78 A31.8 31.8 0 0 1 1324.77 910.32" fill="none" stroke="#9a36df" stroke-width="5.2" stroke-linecap="round"/><circle cx="1356.4" cy="907" r="26.5" fill="#fff"/><path d="M1351.48 906.13 L1334.73 903.18" stroke="#17191b" stroke-width="2.2" stroke-linecap="round"/><text x="914.5" y="945" text-anchor="middle" font-size="17" fill="#dcdcdc" font-family="Liberation Sans, sans-serif">Attack</text><text x="1025.6" y="945" text-anchor="middle" font-size="17" fill="#dcdcdc" font-family="Liberation Sans, sans-serif">Release</text><text x="1136.3" y="945" text-anchor="middle" font-size="17" fill="#dcdcdc" font-family="Liberation Sans, sans-serif">Threshold</text><text x="1356" y="956.5" text-anchor="middle" font-size="17" fill="#dcdcdc" font-family="Liberation Sans, sans-serif">Spread</text><g clip-path="url(#ngc)"><path d="M1506 927 C1509.0 920.7 1516.8 898.2 1523.7 889 C1530.6 879.8 1539.7 872.5 1547.2 871.8 C1554.7 871.1 1562.3 877.2 1568.5 884.6 C1574.7 892.0 1578.6 902.9 1584.2 916 C1589.8 929.1 1596.9 950.7 1602.2 963 C1607.5 975.3 1611.2 983.8 1616 990 C1620.8 996.2 1625.8 1000.3 1631 1000 C1636.2 999.7 1641.9 995.3 1647 988 C1652.1 980.7 1656.0 971.4 1661.6 956.4 C1667.2 941.4 1674.9 913.0 1680.7 898 C1686.5 883.0 1691.4 873.2 1696.4 866.7 C1701.5 860.2 1705.8 858.4 1711 858.8 C1716.2 859.2 1722.4 862.5 1727.8 869 C1733.2 875.5 1738.3 886.8 1743.5 898 C1748.7 909.2 1754.7 925.2 1759.2 936 C1763.7 946.8 1766.7 954.8 1770.5 963 C1774.3 971.2 1778.2 980.2 1782 985 C1785.8 989.8 1789.7 992.3 1793 992 C1796.3 991.7 1799.4 987.2 1802 983 C1804.6 978.8 1805.3 973.7 1808.6 967 C1811.9 960.3 1817.9 951.5 1822 943 C1826.1 934.5 1830.4 923.7 1833.3 916 C1836.2 908.3 1838.5 900.2 1839.6 897" fill="none" stroke="#e2b96f" stroke-width="1.6"/><rect x="1602.5" y="959" width="141" height="40" rx="13" fill="#16191c" stroke="#fff" stroke-width="1.6"/><text x="1521" y="974" font-size="14" fill="#e0e0e0" font-family="Liberation Sans, sans-serif">-65.4 dB</text></g><rect x="1951" y="860" width="134" height="110" fill="url(#rv)"/><circle cx="2017.3" cy="927.3" r="44.3" fill="none" stroke="#c8703a" stroke-width="1.7"/><rect x="2264.7" y="775.8000000000001" width="18" height="1.6" fill="#3c4043"/><rect x="2317.2" y="775.8000000000001" width="18" height="1.6" fill="#3c4043"/><rect x="2264.7" y="803.1" width="18" height="1.6" fill="#3c4043"/><rect x="2317.2" y="803.1" width="18" height="1.6" fill="#3c4043"/><rect x="2264.7" y="830.6" width="18" height="1.6" fill="#3c4043"/><rect x="2317.2" y="830.6" width="18" height="1.6" fill="#3c4043"/><rect x="2264.7" y="857.9000000000001" width="18" height="1.6" fill="#3c4043"/><rect x="2317.2" y="857.9000000000001" width="18" height="1.6" fill="#3c4043"/><rect x="2264.7" y="885.2" width="18" height="1.6" fill="#3c4043"/><rect x="2317.2" y="885.2" width="18" height="1.6" fill="#3c4043"/><rect x="2264.7" y="912.8000000000001" width="18" height="1.6" fill="#3c4043"/><rect x="2317.2" y="912.8000000000001" width="18" height="1.6" fill="#3c4043"/><rect x="2264.7" y="940.1" width="18" height="1.6" fill="#3c4043"/><rect x="2317.2" y="940.1" width="18" height="1.6" fill="#3c4043"/><rect x="2299.2" y="775" width="1.8" height="58" fill="#4b4e52"/><rect x="2298.3" y="832" width="3.6" height="140" fill="#9a36df"/><circle cx="2300.1" cy="832.1" r="5.6" fill="#fff"/></svg>
</div></body></html>
